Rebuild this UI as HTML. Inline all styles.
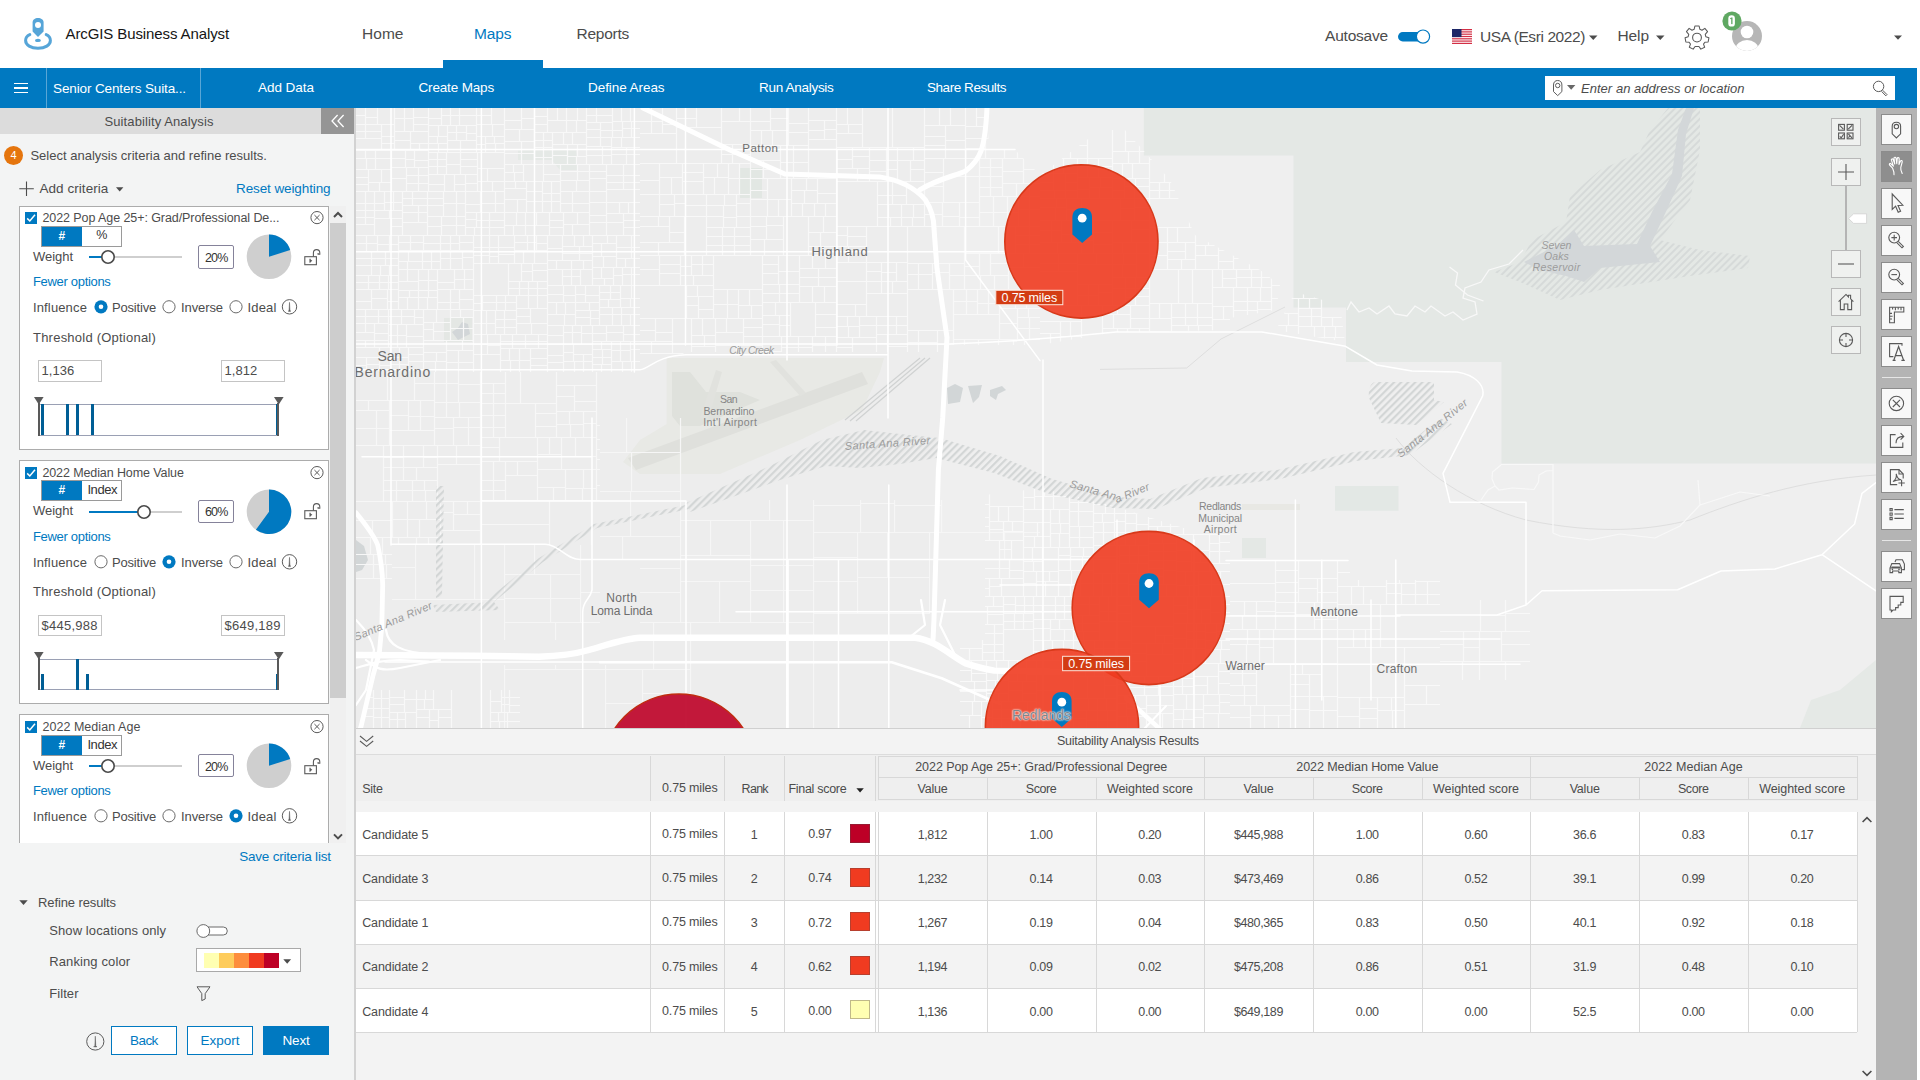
<!DOCTYPE html>
<html>
<head>
<meta charset="utf-8">
<title>ArcGIS Business Analyst</title>
<style>
*{box-sizing:border-box;margin:0;padding:0}
html,body{width:1920px;height:1080px;overflow:hidden;background:#fff;font-family:"Liberation Sans",sans-serif;color:#4c4c4c}
#app{position:relative;width:1917px;height:1080px;overflow:hidden;background:#fff}
.abs{position:absolute}
.t{position:absolute;white-space:nowrap;line-height:1}
/* header */
#hdr{position:absolute;left:0;top:0;width:1917px;height:68px;background:#fff}
#hdr .nav{position:absolute;top:26px;font-size:15.5px;color:#4c4c4c;line-height:1}
#tabline{position:absolute;left:443px;top:60px;width:100px;height:8px;background:#0079c1}
/* blue bar */
#bar{position:absolute;left:0;top:68px;width:1917px;height:40px;background:#0079c1;color:#fff}
#bar .sep{position:absolute;top:0;width:1px;height:40px;background:#59a6d6}
#bar .mi{position:absolute;top:13px;font-size:13px;line-height:1;color:#fff;white-space:nowrap}
#search{position:absolute;left:1545px;top:8px;width:350px;height:24px;background:#fff}
/* left panel */
#left{position:absolute;left:0;top:108px;width:354px;height:972px;background:#f3f4f4}
#lborder{position:absolute;left:354px;top:108px;width:2px;height:972px;background:#d2d2d2}
#lhead{position:absolute;left:0;top:0;width:354px;height:26px;background:#dcdcdc}
#lcollapse{position:absolute;left:321px;top:0;width:33px;height:26px;background:#959595}
.card{background:#fff;border:1px solid #acacac}
/* map */
#map{position:absolute;left:356px;top:108px;width:1520px;height:620px;background:#eeeeee;overflow:hidden}
/* right tools */
#tools{position:absolute;left:1876px;top:108px;width:41px;height:972px;background:#b4b4b4}
.tb{position:absolute;left:5px;width:31px;height:30.5px;background:#f8f8f8;border:1px solid #8c8c8c}
/* results */
#results{position:absolute;left:356px;top:728px;width:1520px;height:352px;background:#f3f3f3}
</style>
</head>
<body>
<div id="app">
<div id="hdr"><svg class="abs" style="left:15px;top:10px" width="50" height="50" viewBox="0 0 50 50">
<path d="M17.6 12.5 C17.6 9.5 20 8 23 8 C26 8 28.6 9.5 28.6 12.5 L28.6 21.5 L23 27 L17.6 21.5 Z" fill="#56a5d8"/>
<circle cx="23" cy="15" r="3" fill="#fff"/>
<ellipse cx="23" cy="30.4" rx="2.9" ry="1.7" fill="#56a5d8"/>
<path d="M14.8 24.6 C11.5 26 10.6 28.3 10.6 30.6 C10.6 35.2 16 38.2 23 38.2 C30 38.2 35.4 35.2 35.4 30.6 C35.4 28.3 34.5 26 31.2 24.6" fill="none" stroke="#56a5d8" stroke-width="3" stroke-linecap="round"/>
</svg><span class="t" style="left:65.50px;top:26.30px;font-size:15px;letter-spacing:-0.105px;color:#151515;">ArcGIS Business Analyst</span><span class="t" style="left:362.00px;top:25.88px;font-size:15.5px;letter-spacing:0.035px;color:#4c4c4c;">Home</span><span class="t" style="left:474.00px;top:25.88px;font-size:15.5px;letter-spacing:-0.102px;color:#0079c1;">Maps</span><span class="t" style="left:576.50px;top:25.88px;font-size:15.5px;letter-spacing:-0.254px;color:#4c4c4c;">Reports</span><div id="tabline"></div><span class="t" style="left:1325.00px;top:27.88px;font-size:15.5px;letter-spacing:-0.205px;color:#4c4c4c;">Autosave</span><svg class="abs" style="left:1396px;top:27px" width="38" height="20" viewBox="0 0 38 20">
<rect x="2" y="5" width="30" height="9.5" rx="4.75" fill="#0079c1"/>
<circle cx="27" cy="9.6" r="6.6" fill="#fff" stroke="#0079c1" stroke-width="1.2"/></svg><svg class="abs" style="left:1452px;top:29px" width="20" height="15" viewBox="0 0 20 15">
<rect width="20" height="15" fill="#fff"/>
<g fill="#d32f45"><rect y="0" width="20" height="1.25"/><rect y="2.3" width="20" height="1.2"/><rect y="4.6" width="20" height="1.2"/><rect y="6.9" width="20" height="1.2"/><rect y="9.2" width="20" height="1.2"/><rect y="11.5" width="20" height="1.2"/><rect y="13.8" width="20" height="1.2"/></g>
<rect width="9.5" height="8.1" fill="#1d2767"/></svg><span class="t" style="left:1480.00px;top:28.88px;font-size:15.5px;letter-spacing:-0.409px;color:#4c4c4c;">USA (Esri 2022)</span><svg class="abs" style="left:1589px;top:35px" width="9" height="6"><path d="M0 0.5 L8.5 0.5 L4.25 5 Z" fill="#4c4c4c"/></svg><span class="t" style="left:1617.50px;top:27.88px;font-size:15.5px;letter-spacing:-0.098px;color:#4c4c4c;">Help</span><svg class="abs" style="left:1656px;top:35px" width="9" height="6"><path d="M0 0.5 L8.5 0.5 L4.25 5 Z" fill="#4c4c4c"/></svg><svg class="abs" style="left:1683px;top:24px" width="28" height="28" viewBox="-14 -14 28 28">
<path d="M-2.2 -12 L2.2 -12 L3 -8.6 L5.2 -7.6 L8.2 -9.6 L11 -6.2 L8.6 -3.4 L9.2 -1 L12.4 0.2 L11.6 4.6 L8.2 4.8 L6.8 6.8 L8 10 L4 12 L2 9.2 L-2 9.2 L-4 12 L-8 10 L-6.8 6.8 L-8.2 4.8 L-11.6 4.6 L-12.4 0.2 L-9.2 -1 L-8.6 -3.4 L-11 -6.2 L-8.2 -9.6 L-5.2 -7.6 L-3 -8.6 Z" fill="none" stroke="#5a5a5a" stroke-width="1.1" stroke-linejoin="round" transform="translate(0,-0.4) scale(0.96)"/>
<circle cx="0" cy="-0.4" r="4.4" fill="none" stroke="#5a5a5a" stroke-width="1.1"/></svg><svg class="abs" style="left:1720px;top:9px" width="44" height="44" viewBox="0 0 44 44">
<defs><clipPath id="avc"><circle cx="27" cy="27" r="15"/></clipPath></defs>
<circle cx="27" cy="27" r="15" fill="#b6b6b6"/>
<g clip-path="url(#avc)"><circle cx="27" cy="23" r="6.3" fill="#fff"/><ellipse cx="27" cy="40.5" rx="11.5" ry="9.5" fill="#fff"/></g>
<circle cx="12" cy="12" r="9.6" fill="#5fa862"/>
<rect x="8.3" y="6.2" width="6.6" height="11.4" rx="3.2" fill="#fff"/>
<rect x="11.2" y="8.5" width="1.3" height="6.6" fill="#5fa862"/><rect x="10.2" y="8.9" width="1.6" height="1.2" fill="#5fa862"/>
</svg><svg class="abs" style="left:1894px;top:35px" width="9" height="6"><path d="M0 0.5 L8 0.5 L4 4.8 Z" fill="#4c4c4c"/></svg></div>
<div id="bar"><div class="abs" style="left:14px;top:15px;width:14px;height:1.3px;background:#fff"></div><div class="abs" style="left:14px;top:19.3px;width:14px;height:1.3px;background:#fff"></div><div class="abs" style="left:14px;top:23.6px;width:14px;height:1.3px;background:#fff"></div><div class="sep" style="left:46px"></div><div class="sep" style="left:200px"></div><span class="t" style="left:53.00px;top:13.57px;font-size:13.5px;letter-spacing:-0.123px;color:#fff;">Senior Centers Suita...</span><span class="t" style="left:258.00px;top:12.57px;font-size:13.5px;letter-spacing:-0.037px;color:#fff;">Add Data</span><span class="t" style="left:418.50px;top:12.57px;font-size:13.5px;letter-spacing:-0.163px;color:#fff;">Create Maps</span><span class="t" style="left:588.00px;top:12.57px;font-size:13.5px;letter-spacing:-0.066px;color:#fff;">Define Areas</span><span class="t" style="left:759.00px;top:12.57px;font-size:13.5px;letter-spacing:-0.296px;color:#fff;">Run Analysis</span><span class="t" style="left:927.00px;top:12.57px;font-size:13.5px;letter-spacing:-0.446px;color:#fff;">Share Results</span><div id="search"><svg class="abs" style="left:6px;top:3px" width="14" height="18" viewBox="0 0 14 18"><path d="M2.5 6 C2.5 3 4.2 1.5 6.7 1.5 C9.2 1.5 10.9 3 10.9 6 L10.9 12.6 L6.7 16.6 L2.5 12.6 Z" fill="none" stroke="#5e5e5e" stroke-width="1"/><circle cx="6.7" cy="6.5" r="2.2" fill="none" stroke="#5e5e5e" stroke-width="1"/></svg><svg class="abs" style="left:22.3px;top:9.3px" width="9" height="6"><path d="M0 0 L8.4 0 L4.2 4.8 Z" fill="#686868"/></svg><span class="t" style="left:36.00px;top:5.50px;font-size:13px;letter-spacing:0.032px;color:#4c4c4c;font-style:italic;">Enter an address or location</span><svg class="abs" style="left:326px;top:3px" width="20" height="20" viewBox="0 0 20 20"><circle cx="7.6" cy="7.4" r="5.2" fill="none" stroke="#595959" stroke-width="1"/><path d="M11.6 11.2 L16 15.6 L14.8 16.8 L10.6 12.4" fill="#fff" stroke="#595959" stroke-width="1"/></svg></div></div>
<div id="left"><div id="lhead"></div><div id="lcollapse"><svg class="abs" style="left:9px;top:6px" width="16" height="14"><path d="M7.6 1 L2 7 L7.6 13 M13.6 1 L8 7 L13.6 13" fill="none" stroke="#fff" stroke-width="1.3"/></svg></div><span class="t" style="left:104.50px;top:7.00px;font-size:13px;letter-spacing:0.102px;color:#4c4c4c;">Suitability Analysis</span><div class="abs" style="left:4px;top:37.7px;width:19px;height:19px;border-radius:50%;background:#e5750d"></div><span class="t" style="left:10.44px;top:41.89px;font-size:11px;color:#fff;">4</span><span class="t" style="left:30.40px;top:41.00px;font-size:13px;letter-spacing:0.007px;color:#4c4c4c;">Select analysis criteria and refine results.</span><svg class="abs" style="left:19px;top:73px" width="16" height="16"><path d="M7.5 0.5 V15 M0.3 7.7 H14.8" stroke="#4c4c4c" stroke-width="1.1"/></svg><span class="t" style="left:39.40px;top:73.57px;font-size:13.5px;letter-spacing:0.060px;color:#4c4c4c;">Add criteria</span><svg class="abs" style="left:116px;top:78.5px" width="8" height="6"><path d="M0 0.3 L7.4 0.3 L3.7 4.6 Z" fill="#4c4c4c"/></svg><span class="t" style="left:236.00px;top:73.57px;font-size:13.5px;letter-spacing:-0.104px;color:#0079c1;">Reset weighting</span><div class="abs" style="left:0;top:98px;width:354px;height:637.3px;overflow:hidden"><div class="abs card" style="left:19px;top:0.3px;width:310px;height:243.5px"><div class="abs" style="left:0;top:0px"><div class="abs" style="left:5px;top:5px;width:12px;height:12px;background:#0079c1"></div><svg class="abs" style="left:5px;top:5px" width="12" height="12"><path d="M2.2 6.4 L4.8 9 L10 2.8" fill="none" stroke="#fff" stroke-width="1.5"/></svg><span class="t" style="left:22.40px;top:5.02px;font-size:12.5px;letter-spacing:-0.075px;color:#4c4c4c;">2022 Pop Age 25+: Grad/Professional De...</span><svg class="abs" style="left:289.3px;top:3px" width="16" height="16" viewBox="0 0 16 16"><circle cx="8" cy="7.6" r="6.1" fill="none" stroke="#5a5a5a" stroke-width="1"/><path d="M5.4 5 L10.6 10.2 M10.6 5 L5.4 10.2" stroke="#5a5a5a" stroke-width="1"/></svg><div class="abs" style="left:21px;top:18.6px;width:81px;height:21px;background:#fff;border:1px solid #9a9a9a"></div><div class="abs" style="left:22px;top:19.6px;width:39.5px;height:19px;background:#0079c1"></div><span class="t" style="left:38.56px;top:22.44px;font-size:12px;color:#fff;font-weight:bold;">#</span><span class="t" style="left:76.24px;top:21.72px;font-size:12.5px;color:#333;">%</span><span class="t" style="left:13.00px;top:42.80px;font-size:13px;letter-spacing:-0.039px;color:#4c4c4c;">Weight</span><div class="abs" style="left:69px;top:49px;width:93px;height:2px;background:#cfcfcf"></div><div class="abs" style="left:69px;top:49px;width:18.7px;height:2px;background:#0079c1"></div><svg class="abs" style="left:79.7px;top:42px" width="16" height="16"><circle cx="8" cy="8" r="6.2" fill="#fff" stroke="#4a4a4a" stroke-width="1.6"/></svg><div class="abs" style="left:178.2px;top:38px;width:35.6px;height:23.3px;background:#fff;border:1px solid #85829a;border-radius:2px"></div><span class="t" style="left:185.00px;top:44.42px;font-size:12.5px;letter-spacing:-0.844px;color:#333;">20%</span><svg class="abs" style="left:225px;top:26px" width="48" height="48" viewBox="0 0 48 48"><circle cx="24" cy="23.8" r="22.3" fill="#cfcfcf"/><path d="M24 23.8 L24 1.5 A22.3 22.3 0 0 1 45.21 16.91 Z" fill="#0079c1"/></svg><svg class="abs" style="left:283.6px;top:41.5px" width="18" height="18"><g transform="translate(0.2,0.1)" fill="none" stroke="#5a5a5a" stroke-width="1.1"><rect x="0.6" y="7.6" width="11.6" height="8"/><path d="M9.2 7.4 V3.8 C9.2 1.4 10.6 0.5 12.4 0.5 C14.2 0.5 15.6 1.4 15.6 3.8 V5.2 H13.9 V3.8"/><path d="M5.8 9.6 V13.6 M5.8 10.6 L7.2 11.6 L5.8 12.6" /></g></svg><span class="t" style="left:13.00px;top:68.00px;font-size:13px;letter-spacing:-0.320px;color:#0079c1;">Fewer options</span><span class="t" style="left:13.00px;top:94.00px;font-size:13px;letter-spacing:0.137px;color:#4c4c4c;">Influence</span><svg class="abs" style="left:0;top:90px" width="308" height="20"><circle cx="81" cy="9.8" r="6.6" fill="#0079c1"/><circle cx="81" cy="9.8" r="2.3" fill="#fff"/><circle cx="149" cy="9.8" r="6.1" fill="#fff" stroke="#6a6a6a" stroke-width="1"/><circle cx="216" cy="9.8" r="6.1" fill="#fff" stroke="#6a6a6a" stroke-width="1"/><circle cx="269.5" cy="9.8" r="7.2" fill="none" stroke="#5a5a5a" stroke-width="1"/><path d="M269.5 5.336 L269 14.12 L270 14.12 Z" fill="#5a5a5a" stroke="#5a5a5a" stroke-width="0.5"/><path d="M268.06 14.12 h2.88" stroke="#5a5a5a" stroke-width="0.9" fill="none"/></svg><span class="t" style="left:92.00px;top:94.00px;font-size:13px;letter-spacing:-0.191px;color:#4c4c4c;">Positive</span><span class="t" style="left:161.00px;top:94.00px;font-size:13px;letter-spacing:-0.092px;color:#4c4c4c;">Inverse</span><span class="t" style="left:227.50px;top:94.00px;font-size:13px;letter-spacing:0.159px;color:#4c4c4c;">Ideal</span><span class="t" style="left:13.00px;top:123.50px;font-size:13px;letter-spacing:0.225px;color:#4c4c4c;">Threshold (Optional)</span><div class="abs" style="left:18px;top:153px;width:64px;height:21.5px;background:#fff;border:1px solid #c4c4c4"></div><div class="abs" style="left:201.2px;top:153px;width:64px;height:21.5px;background:#fff;border:1px solid #c4c4c4"></div><span class="t" style="left:21.60px;top:157.00px;font-size:13px;letter-spacing:0.031px;color:#4c4c4c;">1,136</span><span class="t" style="left:204.60px;top:157.00px;font-size:13px;letter-spacing:0.031px;color:#4c4c4c;">1,812</span><div class="abs" style="left:18.4px;top:197px;width:241px;height:31.5px;background:#fff;border:1px solid #9aa0b4"></div><div class="abs" style="left:20.9px;top:197px;width:3px;height:31px;background:#005e95"></div><div class="abs" style="left:46px;top:197px;width:3px;height:31px;background:#005e95"></div><div class="abs" style="left:56px;top:197px;width:3px;height:31px;background:#005e95"></div><div class="abs" style="left:71px;top:197px;width:3px;height:31px;background:#005e95"></div><div class="abs" style="left:255.6px;top:197px;width:1.6px;height:31px;background:#005e95"></div><div class="abs" style="left:17.6px;top:196px;width:2.2px;height:32.5px;background:#595959"></div><svg class="abs" style="left:13.8px;top:190px" width="10" height="8"><path d="M0 0 L9.6 0 L4.8 7.6 Z" fill="#595959"/></svg><div class="abs" style="left:257.3px;top:196px;width:2.2px;height:32.5px;background:#595959"></div><svg class="abs" style="left:253.8px;top:190px" width="10" height="8"><path d="M0 0 L9.6 0 L4.8 7.6 Z" fill="#595959"/></svg></div></div><div class="abs card" style="left:19px;top:254.3px;width:310px;height:243.5px"><div class="abs" style="left:0;top:0.3px"><div class="abs" style="left:5px;top:5px;width:12px;height:12px;background:#0079c1"></div><svg class="abs" style="left:5px;top:5px" width="12" height="12"><path d="M2.2 6.4 L4.8 9 L10 2.8" fill="none" stroke="#fff" stroke-width="1.5"/></svg><span class="t" style="left:22.40px;top:5.02px;font-size:12.5px;letter-spacing:-0.101px;color:#4c4c4c;">2022 Median Home Value</span><svg class="abs" style="left:289.3px;top:3px" width="16" height="16" viewBox="0 0 16 16"><circle cx="8" cy="7.6" r="6.1" fill="none" stroke="#5a5a5a" stroke-width="1"/><path d="M5.4 5 L10.6 10.2 M10.6 5 L5.4 10.2" stroke="#5a5a5a" stroke-width="1"/></svg><div class="abs" style="left:21px;top:18.6px;width:81px;height:21px;background:#fff;border:1px solid #9a9a9a"></div><div class="abs" style="left:22px;top:19.6px;width:39.5px;height:19px;background:#0079c1"></div><span class="t" style="left:38.56px;top:22.44px;font-size:12px;color:#fff;font-weight:bold;">#</span><span class="t" style="left:67.40px;top:21.80px;font-size:13px;letter-spacing:-0.402px;color:#333;">Index</span><span class="t" style="left:13.00px;top:42.80px;font-size:13px;letter-spacing:-0.039px;color:#4c4c4c;">Weight</span><div class="abs" style="left:69px;top:49px;width:93px;height:2px;background:#cfcfcf"></div><div class="abs" style="left:69px;top:49px;width:54.8px;height:2px;background:#0079c1"></div><svg class="abs" style="left:115.8px;top:42px" width="16" height="16"><circle cx="8" cy="8" r="6.2" fill="#fff" stroke="#4a4a4a" stroke-width="1.6"/></svg><div class="abs" style="left:178.2px;top:38px;width:35.6px;height:23.3px;background:#fff;border:1px solid #85829a;border-radius:2px"></div><span class="t" style="left:185.00px;top:44.42px;font-size:12.5px;letter-spacing:-0.844px;color:#333;">60%</span><svg class="abs" style="left:225px;top:26px" width="48" height="48" viewBox="0 0 48 48"><circle cx="24" cy="23.8" r="22.3" fill="#cfcfcf"/><path d="M24 23.8 L24 1.5 A22.3 22.3 0 1 1 10.89 41.84 Z" fill="#0079c1"/></svg><svg class="abs" style="left:283.6px;top:41.5px" width="18" height="18"><g transform="translate(0.2,0.1)" fill="none" stroke="#5a5a5a" stroke-width="1.1"><rect x="0.6" y="7.6" width="11.6" height="8"/><path d="M9.2 7.4 V3.8 C9.2 1.4 10.6 0.5 12.4 0.5 C14.2 0.5 15.6 1.4 15.6 3.8 V5.2 H13.9 V3.8"/><path d="M5.8 9.6 V13.6 M5.8 10.6 L7.2 11.6 L5.8 12.6" /></g></svg><span class="t" style="left:13.00px;top:68.00px;font-size:13px;letter-spacing:-0.320px;color:#0079c1;">Fewer options</span><span class="t" style="left:13.00px;top:94.00px;font-size:13px;letter-spacing:0.137px;color:#4c4c4c;">Influence</span><svg class="abs" style="left:0;top:90px" width="308" height="20"><circle cx="81" cy="9.8" r="6.1" fill="#fff" stroke="#6a6a6a" stroke-width="1"/><circle cx="149" cy="9.8" r="6.6" fill="#0079c1"/><circle cx="149" cy="9.8" r="2.3" fill="#fff"/><circle cx="216" cy="9.8" r="6.1" fill="#fff" stroke="#6a6a6a" stroke-width="1"/><circle cx="269.5" cy="9.8" r="7.2" fill="none" stroke="#5a5a5a" stroke-width="1"/><path d="M269.5 5.336 L269 14.12 L270 14.12 Z" fill="#5a5a5a" stroke="#5a5a5a" stroke-width="0.5"/><path d="M268.06 14.12 h2.88" stroke="#5a5a5a" stroke-width="0.9" fill="none"/></svg><span class="t" style="left:92.00px;top:94.00px;font-size:13px;letter-spacing:-0.191px;color:#4c4c4c;">Positive</span><span class="t" style="left:161.00px;top:94.00px;font-size:13px;letter-spacing:-0.092px;color:#4c4c4c;">Inverse</span><span class="t" style="left:227.50px;top:94.00px;font-size:13px;letter-spacing:0.159px;color:#4c4c4c;">Ideal</span><span class="t" style="left:13.00px;top:123.50px;font-size:13px;letter-spacing:0.225px;color:#4c4c4c;">Threshold (Optional)</span><div class="abs" style="left:18px;top:153px;width:64px;height:21.5px;background:#fff;border:1px solid #c4c4c4"></div><div class="abs" style="left:201.2px;top:153px;width:64px;height:21.5px;background:#fff;border:1px solid #c4c4c4"></div><span class="t" style="left:21.60px;top:157.00px;font-size:13px;letter-spacing:0.221px;color:#4c4c4c;">$445,988</span><span class="t" style="left:204.60px;top:157.00px;font-size:13px;letter-spacing:0.221px;color:#4c4c4c;">$649,189</span><div class="abs" style="left:18.4px;top:197px;width:241px;height:31.5px;background:#fff;border:1px solid #9aa0b4"></div><div class="abs" style="left:20.7px;top:212.5px;width:3px;height:15.5px;background:#005e95"></div><div class="abs" style="left:56px;top:197px;width:3px;height:31px;background:#005e95"></div><div class="abs" style="left:66px;top:212.5px;width:3px;height:15.5px;background:#005e95"></div><div class="abs" style="left:256px;top:212.5px;width:1.4px;height:15.5px;background:#005e95"></div><div class="abs" style="left:17.6px;top:196px;width:2.2px;height:32.5px;background:#595959"></div><svg class="abs" style="left:13.8px;top:190px" width="10" height="8"><path d="M0 0 L9.6 0 L4.8 7.6 Z" fill="#595959"/></svg><div class="abs" style="left:257.3px;top:196px;width:2.2px;height:32.5px;background:#595959"></div><svg class="abs" style="left:253.8px;top:190px" width="10" height="8"><path d="M0 0 L9.6 0 L4.8 7.6 Z" fill="#595959"/></svg></div></div><div class="abs card" style="left:19px;top:508.3px;width:310px;height:243.5px"><div class="abs" style="left:0;top:0.9px"><div class="abs" style="left:5px;top:5px;width:12px;height:12px;background:#0079c1"></div><svg class="abs" style="left:5px;top:5px" width="12" height="12"><path d="M2.2 6.4 L4.8 9 L10 2.8" fill="none" stroke="#fff" stroke-width="1.5"/></svg><span class="t" style="left:22.40px;top:5.02px;font-size:12.5px;letter-spacing:0.046px;color:#4c4c4c;">2022 Median Age</span><svg class="abs" style="left:289.3px;top:3px" width="16" height="16" viewBox="0 0 16 16"><circle cx="8" cy="7.6" r="6.1" fill="none" stroke="#5a5a5a" stroke-width="1"/><path d="M5.4 5 L10.6 10.2 M10.6 5 L5.4 10.2" stroke="#5a5a5a" stroke-width="1"/></svg><div class="abs" style="left:21px;top:18.6px;width:81px;height:21px;background:#fff;border:1px solid #9a9a9a"></div><div class="abs" style="left:22px;top:19.6px;width:39.5px;height:19px;background:#0079c1"></div><span class="t" style="left:38.56px;top:22.44px;font-size:12px;color:#fff;font-weight:bold;">#</span><span class="t" style="left:67.40px;top:21.80px;font-size:13px;letter-spacing:-0.402px;color:#333;">Index</span><span class="t" style="left:13.00px;top:42.80px;font-size:13px;letter-spacing:-0.039px;color:#4c4c4c;">Weight</span><div class="abs" style="left:69px;top:49px;width:93px;height:2px;background:#cfcfcf"></div><div class="abs" style="left:69px;top:49px;width:18.7px;height:2px;background:#0079c1"></div><svg class="abs" style="left:79.7px;top:42px" width="16" height="16"><circle cx="8" cy="8" r="6.2" fill="#fff" stroke="#4a4a4a" stroke-width="1.6"/></svg><div class="abs" style="left:178.2px;top:38px;width:35.6px;height:23.3px;background:#fff;border:1px solid #85829a;border-radius:2px"></div><span class="t" style="left:185.00px;top:44.42px;font-size:12.5px;letter-spacing:-0.844px;color:#333;">20%</span><svg class="abs" style="left:225px;top:26px" width="48" height="48" viewBox="0 0 48 48"><circle cx="24" cy="23.8" r="22.3" fill="#cfcfcf"/><path d="M24 23.8 L24 1.5 A22.3 22.3 0 0 1 45.21 16.91 Z" fill="#0079c1"/></svg><svg class="abs" style="left:283.6px;top:41.5px" width="18" height="18"><g transform="translate(0.2,0.1)" fill="none" stroke="#5a5a5a" stroke-width="1.1"><rect x="0.6" y="7.6" width="11.6" height="8"/><path d="M9.2 7.4 V3.8 C9.2 1.4 10.6 0.5 12.4 0.5 C14.2 0.5 15.6 1.4 15.6 3.8 V5.2 H13.9 V3.8"/><path d="M5.8 9.6 V13.6 M5.8 10.6 L7.2 11.6 L5.8 12.6" /></g></svg><span class="t" style="left:13.00px;top:68.00px;font-size:13px;letter-spacing:-0.320px;color:#0079c1;">Fewer options</span><span class="t" style="left:13.00px;top:94.00px;font-size:13px;letter-spacing:0.137px;color:#4c4c4c;">Influence</span><svg class="abs" style="left:0;top:90px" width="308" height="20"><circle cx="81" cy="9.8" r="6.1" fill="#fff" stroke="#6a6a6a" stroke-width="1"/><circle cx="149" cy="9.8" r="6.1" fill="#fff" stroke="#6a6a6a" stroke-width="1"/><circle cx="216" cy="9.8" r="6.6" fill="#0079c1"/><circle cx="216" cy="9.8" r="2.3" fill="#fff"/><circle cx="269.5" cy="9.8" r="7.2" fill="none" stroke="#5a5a5a" stroke-width="1"/><path d="M269.5 5.336 L269 14.12 L270 14.12 Z" fill="#5a5a5a" stroke="#5a5a5a" stroke-width="0.5"/><path d="M268.06 14.12 h2.88" stroke="#5a5a5a" stroke-width="0.9" fill="none"/></svg><span class="t" style="left:92.00px;top:94.00px;font-size:13px;letter-spacing:-0.191px;color:#4c4c4c;">Positive</span><span class="t" style="left:161.00px;top:94.00px;font-size:13px;letter-spacing:-0.092px;color:#4c4c4c;">Inverse</span><span class="t" style="left:227.50px;top:94.00px;font-size:13px;letter-spacing:0.159px;color:#4c4c4c;">Ideal</span></div></div><div class="abs" style="left:329.5px;top:0;width:16.5px;height:638px;background:#f0f0f0"></div><div class="abs" style="left:329.5px;top:17px;width:16.5px;height:474.5px;background:#cdcdcd"></div><svg class="abs" style="left:332px;top:4px" width="12" height="9"><path d="M2 7 L6 3 L10 7" fill="none" stroke="#4c4c4c" stroke-width="2"/></svg><svg class="abs" style="left:332px;top:626px" width="12" height="9"><path d="M2 2.4 L6 6.4 L10 2.4" fill="none" stroke="#4c4c4c" stroke-width="2"/></svg></div><span class="t" style="left:239.20px;top:742.07px;font-size:13.5px;letter-spacing:-0.205px;color:#0079c1;">Save criteria list</span><svg class="abs" style="left:19px;top:791.5px" width="10" height="6"><path d="M0.3 0.3 L8.7 0.3 L4.5 5 Z" fill="#4c4c4c"/></svg><span class="t" style="left:38.00px;top:788.40px;font-size:13px;letter-spacing:-0.106px;color:#4c4c4c;">Refine results</span><span class="t" style="left:49.20px;top:816.30px;font-size:13px;letter-spacing:0.110px;color:#4c4c4c;">Show locations only</span><svg class="abs" style="left:194px;top:813.5px" width="36" height="18" viewBox="0 0 36 18"><rect x="4" y="5" width="29.3" height="8" rx="4" fill="#fff" stroke="#6a6a6a" stroke-width="1"/><circle cx="9.3" cy="9" r="6.4" fill="#fff" stroke="#6a6a6a" stroke-width="1"/></svg><span class="t" style="left:49.20px;top:846.50px;font-size:13px;letter-spacing:0.115px;color:#4c4c4c;">Ranking color</span><div class="abs" style="left:196px;top:840.3px;width:104.5px;height:24px;background:#fff;border:1px solid #a9a9a9"></div><div class="abs" style="left:203.6px;top:845px;width:15.2px;height:14.8px;background:#ffffb2"></div><div class="abs" style="left:218.7px;top:845px;width:15.2px;height:14.8px;background:#fecc5c"></div><div class="abs" style="left:233.8px;top:845px;width:15.2px;height:14.8px;background:#fd8d3c"></div><div class="abs" style="left:248.9px;top:845px;width:15.2px;height:14.8px;background:#f03b20"></div><div class="abs" style="left:264px;top:845px;width:15.2px;height:14.8px;background:#bd0026"></div><svg class="abs" style="left:283px;top:850.8px" width="9" height="6"><path d="M0.3 0.3 L8.1 0.3 L4.2 4.8 Z" fill="#4c4c4c"/></svg><span class="t" style="left:49.20px;top:879.30px;font-size:13px;letter-spacing:0.085px;color:#4c4c4c;">Filter</span><svg class="abs" style="left:196px;top:877.5px" width="16" height="16" viewBox="0 0 16 16"><path d="M1 0.8 H14 L9.2 7.6 V13 L5.8 14.6 V7.6 Z" fill="none" stroke="#5a5a5a" stroke-width="1" stroke-linejoin="round"/></svg><svg class="abs" style="left:85px;top:922.5px" width="21" height="21"><circle cx="10.3" cy="10.5" r="8.6" fill="none" stroke="#5a5a5a" stroke-width="1"/><path d="M10.3 5.168 L9.8 15.66 L10.8 15.66 Z" fill="#5a5a5a" stroke="#5a5a5a" stroke-width="0.5"/><path d="M8.58 15.66 h3.44" stroke="#5a5a5a" stroke-width="0.9" fill="none"/></svg><div class="abs" style="left:111px;top:918px;width:66px;height:28.7px;background:#fff;border:1px solid #0079c1"></div><div class="abs" style="left:187px;top:918px;width:66px;height:28.7px;background:#fff;border:1px solid #0079c1"></div><div class="abs" style="left:263px;top:918px;width:66px;height:28.7px;background:#0079c1"></div><span class="t" style="left:130.00px;top:926.07px;font-size:13.5px;letter-spacing:-0.554px;color:#0079c1;">Back</span><span class="t" style="left:200.50px;top:926.07px;font-size:13.5px;letter-spacing:-0.005px;color:#0079c1;">Export</span><span class="t" style="left:282.50px;top:926.07px;font-size:13.5px;letter-spacing:-0.141px;color:#fff;">Next</span></div><div id="lborder"></div>
<div id="map"><svg class="abs" style="left:0;top:0" width="1520" height="620" viewBox="356 108 1520 620"><defs>
<pattern id="g1" width="27" height="21" patternUnits="userSpaceOnUse"><path d="M0 0.5 H27 M0 10.5 H18 M0.5 0 V21 M9.5 0 V10 M18.5 0 V21 M13.5 10 V21" stroke="#f9f9f9" stroke-width="1" fill="none"/></pattern>
<pattern id="g2" width="44" height="36" patternUnits="userSpaceOnUse"><path d="M0 0.5 H44 M0 18.5 H30 M0.5 0 V36 M22.5 0 V18 M30.5 18 V36" stroke="#f7f7f7" stroke-width="1" fill="none"/></pattern>
<pattern id="g3" width="16" height="13" patternUnits="userSpaceOnUse"><path d="M0 0.5 H16 M0.5 0 V13 M8.5 0 V13" stroke="#fafafa" stroke-width="1" fill="none"/></pattern>
<pattern id="hat" width="5" height="5" patternUnits="userSpaceOnUse" patternTransform="rotate(-45)"><rect x="0" y="0" width="5" height="2.2" fill="#d3d6d6"/></pattern>
<pattern id="hat2" width="5" height="5" patternUnits="userSpaceOnUse" patternTransform="rotate(-45)"><rect x="0" y="0" width="5" height="2" fill="#d6dad9"/></pattern>
<clipPath id="mc"><rect x="356" y="108" width="1520" height="620"/></clipPath>
</defs><g clip-path="url(#mc)"><rect x="356" y="108" width="1520" height="620" fill="#ededed"/><path d="M987 108 L985.7 145 L965.6 171 L919.7 189.8 L925.4 199.8 L934 228.5 L937 268.7 L947 337.6 L942.7 418 L938.4 470 L934 619 L931 640 L965.6 663.4 L994.3 670.6 L1060 672 V728 H1876 V108 Z" fill="#efefef"/><path d="M1143.8 108 V155.6 H1293.5 V307.5 H1346 V362 H1501.5 V463.5 H1876 V108 Z" fill="#e4e8e5"/><rect x="740" y="168" width="22" height="30" fill="#e2e7e3"/><rect x="1335" y="486" width="63.5" height="24.7" fill="#e3e8e5"/><rect x="1242" y="504" width="58" height="6" fill="#e8e8e4"/><rect x="1242" y="538" width="24" height="20" fill="#e4e8e5"/><path d="M518 150.5 H576 L578 170 H560 L552 160 H518 Z" fill="#e5e9e6"/><rect x="444" y="318" width="28" height="24" fill="#e4e7e4"/><path d="M452 332 l6 -4 l4 -6 l6 2 l2 10 l-12 6 z" fill="#d2d6d8"/><path d="M666.7 358 H884 L880 372 L862 410 L800 440 L720 474 L640 474 L623 462 L640 440 L666.7 424 Z" fill="#e8e9e5"/><path d="M672 372 L690 372 L706 392 L740 392 L760 400 L700 426 L680 426 L672 416 Z" fill="#dfe1dc"/><path d="M628 458 L862 372 L868 384 L636 470 Z" fill="#dfe0dc"/><path d="M700 418 L716 370 L722 372 L708 420 Z M800 396 L770 362 L776 360 L806 393 Z" fill="#e1e2de"/><path d="M845 420 L920 358 M850 421 L925 358 M856 421 L930 358" stroke="#d0d2d2" stroke-width="1.2" fill="none"/><path d="M947 388 l8 -4 l8 4 l-3 14 l-12 2 z M968 386 l14 -1 l-3 12 l-6 6 z M990 390 l12 -4 l4 4 l-8 4 l-2 6 l-6 -4 z" fill="#d2d6d7"/><path d="M356 540 l8 6 l4 14 l-6 10 l-6 2 z" fill="#d2d6d7"/><clipPath id="ua"><path d="M356 108 H640 V372 H356 Z"/></clipPath><path clip-path="url(#ua)" d="M356 235.5H640M504.5 108V235M356 191.5H504M428.5 108V191M356 150.5H428M394.5 108V150M356 124.5H394M377.5 108V124M365.5 108V124M356 115.5H365M365 117.5H377M381.5 124V150M356 138.5H381M365.5 124V138M356 131.5H365M365 131.5H381M381 136.5H394M381 143.5H394M394 131.5H428M413.5 108V131M394 118.5H413M404.5 108V118M404.5 118V131M413 117.5H428M413 124.5H428M410.5 131V150M394 140.5H410M410 143.5H428M419.5 143V150M391.5 150V191M356 169.5H391M375.5 150V169M356 158.5H375M365.5 150V158M366.5 158V169M375 158.5H391M368.5 169V191M356 177.5H368M356 184.5H368M368 182.5H391M381.5 169V182M379.5 182V191M391 167.5H428M414.5 150V167M405.5 150V167M391 158.5H405M405 159.5H414M414 160.5H428M406.5 167V191M391 178.5H406M406 175.5H428M418.5 167V175M418.5 175V191M406 183.5H418M418 183.5H428M428 152.5H504M476.5 108V152M428 125.5H476M459.5 108V125M441.5 108V125M428 118.5H441M441 115.5H459M450.5 108V115M450.5 115V125M459 115.5H476M447.5 125V152M428 136.5H447M438.5 125V136M428 143.5H447M437.5 136V143M438.5 143V152M447 140.5H476M466.5 125V140M447 132.5H466M456.5 125V132M456.5 132V140M466 133.5H476M460.5 140V152M476 136.5H504M476 124.5H504M491.5 108V124M476 115.5H491M492.5 124V136M485.5 136V152M476 144.5H485M485 143.5H504M494.5 136V143M495.5 143V152M477.5 152V191M428 174.5H477M460.5 152V174M446.5 152V174M428 166.5H446M428 159.5H446M437.5 152V159M437.5 159V166M437.5 166V174M446 164.5H460M460 166.5H477M460 159.5H477M454.5 174V191M444.5 174V191M428 184.5H444M465.5 174V191M454 184.5H465M465 183.5H477M477 168.5H504M477 181.5H504M487.5 168V181M492.5 181V191M427.5 191V235M402.5 191V235M356 210.5H402M374.5 191V210M356 203.5H374M365.5 191V203M365.5 203V210M384.5 191V210M374 203.5H384M384 202.5H402M393.5 191V202M393.5 202V210M374.5 210V235M356 224.5H374M356 217.5H374M365.5 210V217M365.5 217V224M374 218.5H402M389.5 210V218M391.5 218V235M391 226.5H402M402 205.5H427M412.5 191V205M402 198.5H412M412 198.5H427M402 222.5H427M418.5 205V222M402 212.5H418M418 212.5H427M465.5 191V235M427 216.5H465M443.5 191V216M427 205.5H443M427 198.5H443M443 203.5H465M456.5 191V203M456.5 203V216M441.5 216V235M427 226.5H441M441 225.5H465M456.5 216V225M456.5 225V235M465 212.5H504M480.5 191V212M465 204.5H480M480 203.5H504M495.5 191V203M495.5 203V212M489.5 212V235M465 227.5H489M476.5 212V227M465 219.5H476M476 220.5H489M474.5 227V235M489 220.5H504M489 227.5H504M504 164.5H640M586.5 108V164M534.5 108V164M504 129.5H534M521.5 108V129M504 120.5H521M521 118.5H534M504 141.5H534M519.5 129V141M521.5 141V164M504 153.5H521M521 153.5H534M534 132.5H586M566.5 108V132M547.5 108V132M534 124.5H547M534 116.5H547M547 120.5H566M557.5 108V120M566 120.5H586M577.5 108V120M576.5 120V132M552.5 132V164M534 147.5H552M534 140.5H552M543.5 132V140M543.5 140V147M534 157.5H552M543.5 147V157M543.5 157V164M552 144.5H586M563.5 132V144M572.5 132V144M567.5 144V164M552 155.5H567M567 156.5H586M577.5 144V156M576.5 156V164M586 137.5H640M612.5 108V137M586 122.5H612M596.5 108V122M586 115.5H596M596 115.5H612M600.5 122V137M586 129.5H600M600 130.5H612M612 121.5H640M630.5 108V121M621.5 108V121M622.5 121V137M612 130.5H622M622 128.5H640M631.5 121V128M631.5 128V137M611.5 137V164M586 146.5H611M600.5 137V146M602.5 146V164M586 155.5H602M602 155.5H611M611 147.5H640M621.5 137V147M626.5 147V164M611 154.5H626M626 154.5H640M589.5 164V235M504 212.5H589M560.5 164V212M504 181.5H560M523.5 164V181M504 172.5H523M513.5 164V172M514.5 172V181M543.5 164V181M543 174.5H560M526.5 181V212M504 199.5H526M504 188.5H526M515.5 181V188M517.5 199V212M526 201.5H560M542.5 181V201M526 191.5H542M542 193.5H560M551.5 181V193M551.5 193V201M542.5 201V212M551.5 201V212M560 191.5H589M560 180.5H589M577.5 164V180M560 171.5H577M577 171.5H589M576.5 180V191M572.5 191V212M560 203.5H572M572 203.5H589M549.5 212V235M525.5 212V235M504 225.5H525M516.5 212V225M513.5 225V235M525 225.5H549M536.5 212V225M534.5 225V235M563.5 212V235M549 227.5H563M549 220.5H563M563 224.5H589M577.5 212V224M572.5 224V235M589 202.5H640M606.5 164V202M589 178.5H606M589 171.5H606M589 191.5H606M606 189.5H640M623.5 164V189M606 175.5H623M606 182.5H623M623 175.5H640M623 182.5H640M606.5 202V235M589 222.5H606M589 215.5H606M606 213.5H640M628.5 202V213M619.5 202V213M623.5 213V235M606 222.5H623M623 227.5H640M623 220.5H640M547.5 235V372M473.5 235V372M356 309.5H473M398.5 235V309M356 275.5H398M356 251.5H398M377.5 235V251M366.5 235V251M356 243.5H366M366 243.5H377M389.5 235V251M377 244.5H389M389 244.5H398M371.5 251V275M356 265.5H371M356 258.5H371M371 265.5H398M385.5 251V265M371 258.5H385M385 258.5H398M389.5 265V275M380.5 265V275M356 289.5H398M379.5 275V289M368.5 275V289M356 282.5H368M368 282.5H379M388.5 275V289M379 282.5H388M388 282.5H398M371.5 289V309M356 301.5H371M387.5 289V309M371 298.5H387M387 301.5H398M398 269.5H473M440.5 235V269M398 250.5H440M423.5 235V250M410.5 235V250M398 242.5H410M410 242.5H423M423 243.5H440M422.5 250V269M398 261.5H422M408.5 250V261M407.5 261V269M422 261.5H440M431.5 250V261M431.5 261V269M440 250.5H473M459.5 235V250M440 243.5H459M450.5 235V243M450.5 243V250M459 242.5H473M462.5 250V269M440 258.5H462M450.5 250V258M450.5 258V269M462 257.5H473M437.5 269V309M398 290.5H437M418.5 269V290M398 281.5H418M407.5 269V281M418 280.5H437M428.5 269V280M428.5 280V290M418.5 290V309M398 297.5H418M409.5 290V297M407.5 297V309M418 297.5H437M428.5 290V297M427.5 297V309M437 289.5H473M454.5 269V289M437 282.5H454M454 279.5H473M464.5 269V279M464.5 279V289M459.5 289V309M437 302.5H459M450.5 289V302M450.5 302V309M459 299.5H473M423.5 309V372M356 347.5H423M388.5 309V347M356 323.5H388M378.5 309V323M365.5 309V323M356 316.5H365M365 316.5H378M378 316.5H388M374.5 323V347M356 332.5H374M365.5 323V332M356 340.5H374M365.5 340V347M374 333.5H388M374 340.5H388M388 324.5H423M401.5 309V324M388 316.5H401M414.5 309V324M401 316.5H414M414 317.5H423M406.5 324V347M388 335.5H406M397.5 324V335M397.5 335V347M406 336.5H423M390.5 347V372M379.5 347V372M356 357.5H379M366.5 357V372M356 365.5H366M366 364.5H379M379 358.5H390M379 365.5H390M408.5 347V372M390 357.5H408M399.5 347V357M390 364.5H408M399.5 357V364M399.5 364V372M408 361.5H423M408 354.5H423M423 340.5H473M450.5 309V340M423 322.5H450M436.5 309V322M433.5 322V340M423 329.5H433M433 331.5H450M450 328.5H473M450 317.5H473M460.5 309V317M463.5 317V328M463.5 328V340M446.5 340V372M423 361.5H446M423 352.5H446M436.5 352V361M435.5 361V372M446 350.5H473M462.5 340V350M446 362.5H473M458.5 350V362M458.5 362V372M473 295.5H547M473 263.5H547M514.5 235V263M489.5 235V263M473 247.5H489M473 255.5H489M489 247.5H514M498.5 235V247M498.5 247V263M489 256.5H498M498 254.5H514M514 250.5H547M527.5 235V250M514 242.5H527M536.5 235V250M527 242.5H536M536 243.5H547M534.5 250V263M523.5 250V263M508.5 263V295M508 281.5H547M532.5 263V281M521.5 263V281M521 271.5H532M532 270.5H547M528.5 281V295M519.5 281V295M508 288.5H519M519 288.5H528M537.5 281V295M528 288.5H537M537 288.5H547M473 334.5H547M516.5 295V334M473 310.5H516M496.5 295V310M482.5 295V310M473 303.5H482M482 302.5H496M505.5 295V310M496 302.5H505M505 302.5H516M495.5 310V334M473 323.5H495M486.5 310V323M486.5 323V334M495 319.5H516M504.5 310V319M504.5 319V334M495 327.5H504M504 327.5H516M516 308.5H547M537.5 295V308M528.5 295V308M516 323.5H547M530.5 308V323M516 316.5H530M531.5 323V334M500.5 334V372M473 354.5H500M487.5 334V354M473 344.5H487M487 345.5H500M500 348.5H547M525.5 334V348M512.5 334V348M500 341.5H512M512 341.5H525M538.5 334V348M525 341.5H538M538 341.5H547M530.5 348V372M500 360.5H530M519.5 348V360M509.5 348V360M519.5 360V372M510.5 360V372M530 358.5H547M530 365.5H547M547 285.5H640M592.5 235V285M547 260.5H592M562.5 235V260M547 248.5H562M562 246.5H592M574.5 235V246M583.5 235V246M579.5 246V260M562 253.5H579M579 253.5H592M571.5 260V285M547 269.5H571M556.5 260V269M562.5 269V285M562 276.5H571M571 269.5H592M583.5 260V269M580.5 269V285M571 276.5H580M592 267.5H640M616.5 235V267M592 256.5H616M592 243.5H616M607.5 235V243M601.5 243V256M603.5 256V267M616 247.5H640M631.5 235V247M616 258.5H640M631.5 247V258M625.5 258V267M613.5 267V285M592 278.5H613M601.5 267V278M604.5 278V285M622.5 267V285M613 275.5H622M622 274.5H640M631.5 267V274M631.5 274V285M547 325.5H640M599.5 285V325M575.5 285V325M547 302.5H575M563.5 285V302M547 294.5H563M563 295.5H575M547 314.5H575M556.5 302V314M565.5 302V314M564.5 314V325M575 302.5H599M585.5 285V302M575 294.5H585M585 295.5H599M575 310.5H599M589.5 302V310M590.5 310V325M575 317.5H590M590 318.5H599M599 307.5H640M620.5 285V307M599 299.5H620M610.5 285V299M599 292.5H610M610 292.5H620M608.5 299V307M620 298.5H640M631.5 285V298M630.5 298V307M621.5 307V325M599 314.5H621M612.5 307V314M612.5 314V325M621 314.5H640M630.5 314V325M592.5 325V372M547 344.5H592M563.5 325V344M547 335.5H563M581.5 325V344M563 332.5H581M572.5 325V332M572.5 332V344M581 333.5H592M563.5 344V372M547 355.5H563M547 362.5H563M563 361.5H592M573.5 344V361M563 352.5H573M573 354.5H592M583.5 354V361M574.5 361V372M583.5 361V372M592 341.5H640M623.5 325V341M606.5 325V341M592 333.5H606M606 332.5H623M623 334.5H640M611.5 341V372M592 357.5H611M592 349.5H611M601.5 341V349M602.5 349V357M592 364.5H611M602.5 357V364M601.5 364V372M611 361.5H640M630.5 341V361M611 350.5H630M620.5 341V350M620.5 350V361M630 349.5H640M622.5 361V372M631.5 361V372" stroke="#f8f8f8" stroke-width="1.2" fill="none"/><clipPath id="ub"><path d="M640 108 H985 L990 150 H1015 L1040 175 V345 H950 V352 H686 L656 370 H640 Z"/></clipPath><path clip-path="url(#ub)" d="M836.5 108V372M640 255.5H836M750.5 108V255M640 163.5H750M676.5 108V163M640 133.5H676M662.5 108V133M640 121.5H662M651.5 108V121M651.5 121V133M662 124.5H676M721.5 108V163M676 127.5H721M696.5 108V127M676 118.5H696M721 144.5H750M721 121.5H750M739.5 108V121M732.5 144V163M721 154.5H732M732 154.5H750M640 194.5H750M682.5 163V194M659.5 163V194M640 180.5H659M659 177.5H682M671.5 177V194M728.5 163V194M703.5 163V194M682 181.5H703M682 172.5H703M703 177.5H728M717.5 163V177M714.5 177V194M728 178.5H750M739.5 163V178M739.5 178V194M706.5 194V255M640 216.5H706M674.5 194V216M659.5 194V216M659 204.5H674M685.5 194V216M674 203.5H685M685 205.5H706M684.5 216V255M640 242.5H684M669.5 216V242M640 226.5H669M658.5 216V226M669 232.5H684M658.5 242V255M706 227.5H750M736.5 194V227M706 205.5H736M724.5 194V205M723.5 205V227M706 216.5H723M723 217.5H736M736 216.5H750M736 203.5H750M734.5 227V255M706 245.5H734M722.5 227V245M706 236.5H722M722 236.5H734M722.5 245V255M734 245.5H750M734 236.5H750M750 178.5H836M808.5 108V178M750 145.5H808M788.5 108V145M750 130.5H788M770.5 108V130M750 121.5H770M770 118.5H788M772.5 130V145M761.5 130V145M788 132.5H808M788 123.5H808M780.5 145V178M750 160.5H780M763.5 160V178M750 169.5H763M763 169.5H780M780 162.5H808M793.5 145V162M793.5 162V178M808 139.5H836M808 120.5H836M824.5 120V139M808 130.5H824M824 129.5H836M750 216.5H836M791.5 178V216M750 199.5H791M767.5 178V199M750 190.5H767M767.5 199V216M778.5 199V216M791 203.5H836M817.5 178V203M791 190.5H817M806.5 178V190M804.5 190V203M817 193.5H836M814.5 203V216M802.5 203V216M825.5 203V216M808.5 216V255M783.5 216V255M750 239.5H783M766.5 216V239M750 226.5H766M766 225.5H783M764.5 239V255M808 232.5H836M823.5 216V232M808 246.5H836M820.5 232V246M823.5 246V255M762.5 255V372M640 318.5H762M713.5 255V318M640 285.5H713M680.5 255V285M659.5 255V285M640 269.5H659M659 273.5H680M659 264.5H680M680 275.5H713M691.5 255V275M680 266.5H691M691 264.5H713M702.5 255V264M702.5 264V275M693.5 275V285M686.5 285V318M686 296.5H713M697.5 285V296M698.5 296V318M686 305.5H698M698 309.5H713M713 289.5H762M738.5 289V318M713 304.5H738M727.5 289V304M727.5 304V318M738 305.5H762M749.5 289V305M751.5 305V318M691.5 318V372M640 353.5H691M672.5 318V353M640 341.5H672M655.5 318V341M640 330.5H655M655 332.5H672M651.5 341V353M715.5 318V372M691 335.5H715M702.5 318V335M691 355.5H715M691 346.5H715M704.5 335V346M704.5 355V372M715 345.5H762M743.5 318V345M715 332.5H743M726.5 318V332M743 336.5H762M743 327.5H762M736.5 345V372M715 363.5H736M715 354.5H736M762 302.5H836M799.5 255V302M762 284.5H799M778.5 255V284M762 273.5H778M762 264.5H778M778 271.5H799M779.5 284V302M762 293.5H779M779 293.5H799M799 286.5H836M799 268.5H836M812.5 255V268M825.5 255V268M818.5 268V286M799 277.5H818M818 277.5H836M824.5 286V302M812.5 286V302M762 336.5H836M790.5 302V336M762 315.5H790M775.5 302V315M779.5 315V336M762 324.5H779M779 325.5H790M815.5 302V336M815 314.5H836M815 327.5H836M812.5 336V372M781.5 336V372M762 351.5H781M762 360.5H781M781 356.5H812M798.5 336V356M781 347.5H798M798 347.5H812M796.5 356V372M812 357.5H836M812 345.5H836M825.5 336V345M825.5 345V357M825.5 357V372M836 226.5H1040M924.5 108V226M836 147.5H924M892.5 108V147M862.5 108V147M836 133.5H862M836 124.5H862M847.5 108V124M848.5 124V133M836 181.5H924M869.5 147V181M836 168.5H869M852.5 147V168M836 159.5H852M852 156.5H869M857.5 168V181M897.5 147V181M869 160.5H897M886.5 147V160M886.5 160V181M869 171.5H886M886 169.5H897M897 160.5H924M913.5 147V160M910.5 160V181M910 169.5H924M877.5 181V226M877 204.5H924M906.5 181V204M892.5 181V204M877 195.5H892M892 195.5H906M901.5 204V226M877 217.5H901M888.5 204V217M890.5 217V226M901 217.5H924M913.5 204V217M912.5 217V226M924 158.5H1040M965.5 108V158M924 125.5H965M939.5 108V125M950.5 108V125M945.5 125V158M924 145.5H945M924 136.5H945M945 140.5H965M945 149.5H965M1004.5 108V158M965 138.5H1004M988.5 108V138M965 126.5H988M976.5 108V126M976 117.5H988M988 122.5H1004M985.5 138V158M965 148.5H985M985 149.5H1004M1004 140.5H1040M1004 129.5H1040M1028.5 129V140M1017.5 129V140M1017.5 140V158M1004 149.5H1017M1028.5 140V158M1017 149.5H1028M1028 149.5H1040M979.5 158V226M924 202.5H979M943.5 158V202M924 186.5H943M924 172.5H943M943 176.5H979M959.5 202V226M942.5 202V226M924 214.5H942M942 216.5H959M959 217.5H979M979 196.5H1040M1002.5 158V196M979 176.5H1002M990.5 158V176M979 167.5H990M990 167.5H1002M979 187.5H1002M990.5 176V187M990.5 187V196M1002 183.5H1040M1023.5 158V183M1002 171.5H1023M1023 169.5H1040M1016.5 183V196M1029.5 183V196M1018.5 196V226M993.5 196V226M979 212.5H993M993 212.5H1018M1007.5 196V212M1007.5 212V226M1018 209.5H1040M1029.5 196V209M1029.5 209V226M907.5 226V372M836 281.5H907M866.5 226V281M836 262.5H866M836 246.5H866M847.5 226V246M836 235.5H847M847 236.5H866M848.5 246V262M866 262.5H907M881.5 262V281M866 271.5H881M896.5 262V281M881 272.5H896M836 316.5H907M866.5 281V316M836 304.5H866M855.5 304V316M866 293.5H907M892.5 281V293M881.5 281V293M876.5 316V372M836 337.5H876M859.5 316V337M836 326.5H859M847.5 316V326M848.5 326V337M859 325.5H876M836 357.5H876M852.5 337V357M836 347.5H852M876 334.5H907M896.5 316V334M876 325.5H896M896 325.5H907M876 355.5H907M887.5 334V355M876 343.5H887M887 346.5H907M895.5 355V372M907 289.5H1040M964.5 226V289M907 263.5H964M932.5 263V289M907 274.5H932M918.5 263V274M918.5 274V289M949.5 263V289M932 272.5H949M949 275.5H964M964 253.5H1040M998.5 226V253M1015.5 226V253M1015 244.5H1040M1029.5 226V244M1015 235.5H1029M1029 235.5H1040M1029.5 244V253M1008.5 253V289M964 275.5H1008M979.5 253V275M964 266.5H979M990.5 253V275M990 263.5H1008M980.5 275V289M994.5 275V289M1008 267.5H1040M1023.5 253V267M953.5 289V372M907 330.5H953M907 355.5H953M937.5 330V355M907 342.5H937M918.5 330V342M918.5 342V355M937 344.5H953M923.5 355V372M942.5 355V372M953 339.5H1040M999.5 289V339M953 314.5H999M977.5 289V314M953 301.5H977M966.5 289V301M966.5 301V314M977 303.5H999M988.5 289V303M988.5 303V314M999 308.5H1040M1015.5 289V308M999 299.5H1015M1026.5 289V308M1015 298.5H1026M1026 298.5H1040M1017.5 308V339M999 323.5H1017M1017 328.5H1040M1017 317.5H1040M1028.5 308V317M1029.5 317V328M1029.5 328V339M998.5 339V372M978.5 339V372M953 357.5H978M964.5 339V357M953 348.5H964M964 348.5H978M964.5 357V372M978 360.5H998M1013.5 339V372M998 357.5H1013M1013 359.5H1040M1024.5 339V359M1024 348.5H1040M1028.5 359V372" stroke="#f8f8f8" stroke-width="1.2" fill="none"/><clipPath id="uc"><path d="M356 372 H656 V418 H600 V545 H392 V600 H356 Z"/></clipPath><path clip-path="url(#uc)" d="M480.5 372V600M356 501.5H480M356 445.5H480M434.5 372V445M356 400.5H434M387.5 372V400M414.5 372V400M414 383.5H434M389.5 400V445M356 428.5H389M356 410.5H389M368.5 400V410M376.5 410V428M376.5 428V445M389 430.5H434M408.5 400V430M389 415.5H408M408 416.5H434M420.5 400V416M420.5 416V430M434 417.5H480M434 402.5H480M458.5 372V402M434 383.5H458M446.5 372V383M446.5 383V402M458 384.5H480M459.5 402V417M446.5 402V417M453.5 417V445M434 428.5H453M453 427.5H480M468.5 417V427M468.5 427V445M437.5 445V501M383.5 445V501M383 480.5H437M403.5 445V480M383 467.5H403M383 457.5H403M403 467.5H437M423.5 445V467M423 457.5H437M416.5 467V480M412.5 480V501M396.5 480V501M383 490.5H396M396 490.5H412M412 490.5H437M424.5 480V490M425.5 490V501M437 464.5H480M456.5 445V464M440.5 501V600M356 537.5H440M392.5 501V537M356 520.5H392M372.5 520V537M407.5 501V537M392 519.5H407M407 519.5H440M426.5 501V519M419.5 519V537M398.5 537V600M356 578.5H398M356 554.5H398M382.5 537V554M370.5 537V554M373.5 554V578M356 564.5H373M373 564.5H398M385.5 554V564M386.5 564V578M398 575.5H440M398 556.5H440M416.5 537V556M428.5 537V556M413.5 575V600M398 585.5H413M413 586.5H440M440 546.5H480M440 530.5H480M453.5 501V530M440 512.5H453M453 514.5H480M467.5 501V514M440 580.5H480M458.5 580V600M440 590.5H458M458 590.5H480M480 500.5H656M596.5 372V500M480 437.5H596M556.5 372V437M480 403.5H556M520.5 372V403M505.5 372V403M480 383.5H505M493.5 383V403M480 393.5H493M493 393.5H505M505.5 403V437M480 415.5H505M493.5 403V415M480 427.5H505M493.5 415V427M493.5 427V437M535.5 403V437M535 426.5H556M535 413.5H556M556 411.5H596M556 385.5H596M574.5 385V411M556 396.5H574M574 401.5H596M583.5 411V437M556 424.5H583M569.5 411V424M570.5 424V437M583 423.5H596M537.5 437V500M480 461.5H537M499.5 437V461M480 447.5H499M505.5 461V500M480 480.5H505M493.5 461V480M493.5 480V500M480 490.5H493M493 490.5H505M505 475.5H537M517.5 461V475M537 469.5H596M561.5 437V469M537 454.5H561M549.5 437V454M561 456.5H596M575.5 437V456M565.5 469V500M537 487.5H565M553.5 487V500M565 488.5H596M583.5 469V488M582.5 488V500M596 425.5H656M596 469.5H656M616.5 425V469M596 449.5H616M596 439.5H616M596 459.5H616M616 447.5H656M635.5 425V447M616 436.5H635M635 435.5H656M642.5 447V469M616 457.5H642M628.5 457V469M642 459.5H656M625.5 469V500M596 485.5H625M608.5 469V485M608.5 485V500M625 482.5H656M637.5 469V482M638.5 482V500M549.5 500V600M480 567.5H549M480 524.5H549M549 546.5H656M591.5 500V546M610.5 546V600M610 574.5H656M636.5 546V574M610 562.5H636M624.5 546V562M633.5 574V600M610 590.5H633M633 589.5H656" stroke="#f7f7f7" stroke-width="1.2" fill="none"/><clipPath id="ud"><path d="M1040 175 L1100 130 H1125 L1170 180 L1195 235 L1260 270 L1280 285 L1276 310 L1230 318 V330 L1116 332 L1040 345 Z M1276 330 L1345 342 L1340 305 L1295 292 Z"/></clipPath><path clip-path="url(#ud)" d="M1149.5 130V345M1040 253.5H1149M1040 198.5H1149M1112.5 130V198M1040 158.5H1112M1070.5 130V158M1040 146.5H1070M1057.5 130V146M1040 138.5H1057M1059.5 146V158M1087.5 130V158M1070 145.5H1087M1077.5 158V198M1040 173.5H1077M1053.5 158V173M1063.5 158V173M1065.5 173V198M1040 190.5H1065M1053.5 173V190M1040 182.5H1053M1054.5 190V198M1065 182.5H1077M1065 190.5H1077M1077 177.5H1112M1098.5 158V177M1077 166.5H1098M1087.5 158V166M1087.5 166V177M1098 166.5H1112M1089.5 177V198M1077 189.5H1089M1089 187.5H1112M1100.5 177V187M1099.5 187V198M1112 163.5H1149M1112 151.5H1149M1125.5 130V151M1125 141.5H1149M1139.5 141V151M1128.5 151V163M1139.5 151V163M1112 178.5H1149M1132.5 163V178M1122.5 163V178M1124.5 178V198M1112 190.5H1124M1124 186.5H1149M1135.5 178V186M1134.5 186V198M1081.5 198V253M1040 220.5H1081M1066.5 198V220M1040 207.5H1066M1056.5 198V207M1055.5 207V220M1066 209.5H1081M1040 242.5H1081M1061.5 220V242M1040 230.5H1061M1051.5 220V230M1051.5 230V242M1061 234.5H1081M1071.5 220V234M1071.5 234V242M1057.5 242V253M1081 220.5H1149M1120.5 198V220M1134.5 198V220M1120 208.5H1134M1134 207.5H1149M1112.5 220V253M1081 232.5H1112M1093.5 220V232M1093.5 232V253M1081 240.5H1093M1093 244.5H1112M1112 242.5H1149M1131.5 220V242M1131 229.5H1149M1136.5 242V253M1122.5 242V253M1040 305.5H1149M1112.5 253V305M1077.5 253V305M1040 271.5H1077M1058.5 253V271M1040 263.5H1058M1058 263.5H1077M1077 284.5H1112M1077 264.5H1112M1096.5 253V264M1098.5 284V305M1077 295.5H1098M1088.5 284V295M1088.5 295V305M1098 292.5H1112M1112 288.5H1149M1112 277.5H1149M1136.5 253V277M1112 264.5H1136M1123.5 253V264M1122.5 264V277M1135.5 277V288M1125.5 277V288M1135.5 288V305M1125.5 288V305M1125 297.5H1135M1135 296.5H1149M1102.5 305V345M1081.5 305V345M1040 321.5H1081M1060.5 321V345M1040 333.5H1060M1050.5 333V345M1060 336.5H1081M1070.5 321V336M1071.5 336V345M1102 328.5H1149M1130.5 305V328M1102 314.5H1130M1117.5 305V314M1113.5 314V328M1130 318.5H1149M1127.5 328V345M1117.5 328V345M1102 336.5H1117M1117 336.5H1127M1139.5 328V345M1139 336.5H1149M1149 269.5H1345M1249.5 130V269M1149 182.5H1249M1200.5 130V182M1149 159.5H1200M1177.5 130V159M1149 149.5H1177M1166.5 130V149M1166 138.5H1177M1177 149.5H1200M1177 139.5H1200M1189.5 130V139M1187.5 139V149M1189.5 149V159M1180.5 159V182M1164.5 159V182M1164 174.5H1180M1180 168.5H1200M1190.5 159V168M1190.5 168V182M1200 154.5H1249M1218.5 130V154M1200 141.5H1218M1236.5 130V154M1236 145.5H1249M1226.5 154V182M1200 168.5H1226M1212.5 154V168M1210.5 168V182M1226 169.5H1249M1236.5 154V169M1236.5 169V182M1149 227.5H1249M1189.5 182V227M1149 198.5H1189M1169.5 182V198M1149 190.5H1169M1159.5 182V190M1159.5 190V198M1169 190.5H1189M1179.5 182V190M1179.5 190V198M1218.5 182V227M1195.5 227V269M1149 242.5H1195M1177.5 227V242M1167.5 227V242M1167.5 242V269M1149 255.5H1167M1167 259.5H1195M1185.5 242V259M1167 251.5H1185M1181.5 259V269M1218.5 227V269M1195 245.5H1218M1208.5 227V245M1208 237.5H1218M1195 255.5H1218M1205.5 245V255M1218 250.5H1249M1238.5 227V250M1218 236.5H1238M1228.5 227V236M1228.5 236V250M1233.5 250V269M1218 261.5H1233M1233 258.5H1249M1249 177.5H1345M1310.5 130V177M1279.5 130V177M1249 156.5H1279M1249 147.5H1279M1264.5 130V147M1249 138.5H1264M1259.5 147V156M1269.5 147V156M1262.5 156V177M1249 167.5H1262M1262 164.5H1279M1279 149.5H1310M1294.5 130V149M1279 141.5H1294M1294 139.5H1310M1279 160.5H1310M1292.5 149V160M1295.5 160V177M1279 169.5H1295M1295 169.5H1310M1310 161.5H1345M1310 145.5H1345M1332.5 130V145M1322.5 130V145M1326.5 145V161M1326 153.5H1345M1330.5 161V177M1310 169.5H1330M1320.5 161V169M1320.5 169V177M1330 169.5H1345M1249 234.5H1345M1300.5 177V234M1249 213.5H1300M1266.5 177V213M1249 201.5H1266M1266 195.5H1300M1288.5 177V195M1277.5 195V213M1266 203.5H1277M1287.5 195V213M1277 205.5H1287M1287 205.5H1300M1300 206.5H1345M1315.5 206V234M1315 221.5H1345M1326.5 221V234M1291.5 234V269M1324.5 234V269M1291 249.5H1324M1313.5 234V249M1303.5 234V249M1312.5 249V269M1291 261.5H1312M1302.5 249V261M1301.5 261V269M1312 257.5H1324M1324 249.5H1345M1335.5 234V249M1324 258.5H1345M1335.5 249V258M1335.5 258V269M1212.5 269V345M1149 303.5H1212M1192.5 269V303M1178.5 269V303M1171.5 303V345M1149 331.5H1171M1149 318.5H1171M1159.5 303V318M1159.5 331V345M1171 325.5H1212M1197.5 303V325M1171 317.5H1197M1185.5 303V317M1185.5 317V325M1197 317.5H1212M1198.5 325V345M1188.5 325V345M1171 336.5H1188M1198 334.5H1212M1271.5 269V345M1212 319.5H1271M1212 287.5H1271M1236.5 269V287M1222.5 269V287M1222 278.5H1236M1251.5 269V287M1236 277.5H1251M1251 277.5H1271M1261.5 269V277M1261.5 277V287M1233.5 287V319M1212 306.5H1233M1223.5 306V319M1233 301.5H1271M1247.5 287V301M1260.5 287V301M1247.5 301V319M1233 310.5H1247M1257.5 301V319M1247 310.5H1257M1257 309.5H1271M1233.5 319V345M1212 332.5H1233M1222.5 332V345M1246.5 319V345M1233 335.5H1246M1233 327.5H1246M1246 335.5H1271M1260.5 319V335M1246 327.5H1260M1260 327.5H1271M1261.5 335V345M1271 298.5H1345M1314.5 269V298M1291.5 269V298M1271 285.5H1291M1271 277.5H1291M1281.5 269V277M1281.5 277V285M1291 288.5H1314M1303.5 288V298M1314 287.5H1345M1326.5 287V298M1298.5 298V345M1271 325.5H1298M1271 313.5H1298M1284.5 298V313M1288.5 313V325M1286.5 325V345M1271 333.5H1286M1298 326.5H1345M1321.5 298V326M1298 308.5H1321M1309.5 298V308M1311.5 308V326M1298 316.5H1311M1311 316.5H1321M1321 317.5H1345M1332.5 317V326M1314.5 326V345M1324.5 326V345M1314 337.5H1324M1324 337.5H1345M1335.5 326V337M1334.5 337V345" stroke="#f9f9f9" stroke-width="1.2" fill="none"/><clipPath id="ue"><path d="M600 418 H690 V500 H1040 V560 H600 Z M392 545 H600 V640 H392 Z M640 560 H930 V728 H356 V665 H640 Z"/></clipPath><path clip-path="url(#ue)" d="M813.5 418V728M504.5 418V728M356 599.5H504M356 486.5H504M404.5 418V486M356 456.5H404M472.5 418V486M404 448.5H472M434.5 418V448M434.5 448V486M472 461.5H504M415.5 486V599M356 543.5H415M356 514.5H415M356 567.5H415M415 537.5H504M473.5 486V537M415 510.5H473M473 513.5H504M474.5 537V599M504 622.5H813M680.5 418V622M504 536.5H680M592.5 418V536M504 460.5H592M592 491.5H680M592 452.5H680M626.5 418V452M631.5 452V491M630.5 491V536M580.5 536V622M504 574.5H580M534.5 536V574M550.5 574V622M504 598.5H550M550 598.5H580M580 592.5H680M622.5 536V592M622 568.5H680M680 520.5H813M769.5 418V520M750.5 520V622M680 581.5H750M680 555.5H750M710.5 520V555M719.5 581V622M750 565.5H813M783.5 520V565M750 590.5H813M783.5 565V590M783.5 590V622M605.5 622V728M504 669.5H605M555.5 622V669M690.5 622V728M605 669.5H690M653.5 622V669M642.5 669V728M605 703.5H642M642 693.5H690M813 613.5H1040M813 532.5H1040M894.5 418V532M813 478.5H894M864.5 418V478M860.5 478V532M813 505.5H860M860 503.5H894M941.5 418V532M894 461.5H941M894 505.5H941M941 478.5H1040M999.5 418V478M941 442.5H999M999 448.5H1040M929.5 532V613M857.5 532V613M813 581.5H857M813 557.5H857M857 577.5H929M887.5 532V577M1004.5 532V613M1004 578.5H1040M950.5 613V728M950 658.5H1040M1005.5 613V658M996.5 658V728M950 686.5H996" stroke="#f6f6f6" stroke-width="1.2" fill="none"/><clipPath id="uf"><path d="M985 495 L1043 488 L1110 505 L1190 530 H1230 V728 H960 V640 H985 Z"/></clipPath><path clip-path="url(#uf)" d="M960 596.5H1230M1093.5 488V596M1023.5 488V596M960 540.5H1023M989.5 488V540M960 517.5H989M960 504.5H989M973.5 504V517M977.5 517V540M960 531.5H977M977 526.5H989M989 521.5H1023M989 506.5H1023M1008.5 506V521M998.5 506V521M1003.5 521V540M989 529.5H1003M1003 531.5H1023M1012.5 521V531M960 578.5H1023M999.5 540V578M960 559.5H999M975.5 540V559M960 549.5H975M983.5 559V578M983 568.5H999M999 559.5H1023M1011.5 540V559M999 549.5H1011M1009.5 559V578M999 568.5H1009M1009 570.5H1023M989.5 578V596M975.5 578V596M960 588.5H975M975 588.5H989M1001.5 578V596M989 586.5H1001M1023 547.5H1093M1069.5 488V547M1023 509.5H1069M1053.5 488V509M1034.5 488V509M1023 497.5H1034M1034 496.5H1053M1044.5 488V496M1043.5 496V509M1053 496.5H1069M1050.5 509V547M1023 522.5H1050M1023 536.5H1050M1037.5 522V536M1034.5 536V547M1050 523.5H1069M1059.5 509V523M1050 533.5H1069M1060.5 523V533M1059.5 533V547M1069 511.5H1093M1069 502.5H1093M1078.5 488V502M1078.5 502V511M1069 526.5H1093M1078.5 511V526M1079.5 526V547M1069 537.5H1079M1079 537.5H1093M1058.5 547V596M1023 571.5H1058M1042.5 547V571M1023 561.5H1042M1032.5 547V561M1033.5 561V571M1036.5 571V596M1023 583.5H1036M1036 581.5H1058M1049.5 571V581M1045.5 581V596M1058 570.5H1093M1070.5 547V570M1058 555.5H1070M1070 556.5H1093M1083.5 547V556M1082.5 556V570M1080.5 570V596M1058 584.5H1080M1071.5 570V584M1070.5 584V596M1080 583.5H1093M1148.5 488V596M1093 545.5H1148M1093 513.5H1148M1125.5 488V513M1114.5 488V513M1093 496.5H1114M1105.5 488V496M1105.5 496V513M1093 504.5H1105M1105 505.5H1114M1114 497.5H1125M1114 505.5H1125M1125 500.5H1148M1134.5 488V500M1134.5 500V513M1114.5 513V545M1093 532.5H1114M1093 522.5H1114M1102.5 513V522M1103.5 522V532M1103.5 532V545M1114 532.5H1148M1125.5 513V532M1114 521.5H1125M1136.5 513V532M1125 523.5H1136M1136 524.5H1148M1125.5 532V545M1135.5 532V545M1093 573.5H1148M1119.5 545V573M1093 556.5H1119M1119 563.5H1148M1138.5 545V563M1119 555.5H1138M1129.5 545V555M1129.5 555V563M1138 555.5H1148M1137.5 563V573M1128.5 573V596M1111.5 573V596M1093 583.5H1111M1102.5 573V583M1102.5 583V596M1111 583.5H1128M1128 584.5H1148M1139.5 573V584M1139.5 584V596M1148 534.5H1230M1183.5 488V534M1148 510.5H1183M1160.5 488V510M1148 502.5H1160M1160 497.5H1183M1174.5 488V497M1169.5 497V510M1170.5 510V534M1148 526.5H1170M1161.5 510V526M1148 518.5H1161M1161 518.5H1170M1157.5 526V534M1170 526.5H1183M1170 518.5H1183M1183 515.5H1230M1212.5 488V515M1183 505.5H1212M1196.5 488V505M1183 496.5H1196M1196 497.5H1212M1194.5 505V515M1203.5 505V515M1212 497.5H1230M1212 507.5H1230M1221.5 497V507M1221.5 507V515M1176.5 534V596M1148 560.5H1176M1148 543.5H1176M1162.5 534V543M1163.5 543V560M1148 551.5H1163M1163 551.5H1176M1148 584.5H1176M1163.5 560V584M1148 576.5H1163M1148 568.5H1163M1163 570.5H1176M1166.5 584V596M1157.5 584V596M1176 571.5H1230M1209.5 534V571M1176 550.5H1209M1193.5 534V550M1191.5 550V571M1176 561.5H1191M1191 562.5H1209M1200.5 550V562M1209 551.5H1230M1219.5 534V551M1209 543.5H1219M1219 542.5H1230M1209 563.5H1230M1219.5 551V563M1211.5 571V596M1198.5 571V596M1176 585.5H1198M1185.5 571V585M1189.5 585V596M1198 584.5H1211M1211 584.5H1230M1220.5 571V584M1221.5 584V596M1073.5 596V728M960 660.5H1073M1033.5 596V660M1003.5 596V660M960 624.5H1003M978.5 596V624M978 606.5H1003M993.5 596V606M987.5 606V624M987 614.5H1003M982.5 624V660M960 648.5H982M969.5 648V660M982 644.5H1003M982 633.5H1003M994.5 624V633M994.5 633V644M994.5 644V660M982 652.5H994M994 652.5H1003M1003 629.5H1033M1003 613.5H1033M1015.5 596V613M1003 604.5H1015M1015 605.5H1033M1024.5 596V605M1024.5 605V613M1023.5 613V629M1014.5 613V629M1003 621.5H1014M1014 621.5H1023M1023 621.5H1033M1033 619.5H1073M1055.5 596V619M1033 605.5H1055M1042.5 605V619M1055 605.5H1073M1064.5 596V605M1064.5 605V619M1033 640.5H1073M1050.5 619V640M1033 628.5H1050M1050 629.5H1073M1059.5 619V629M1064.5 629V640M1052.5 640V660M1033 651.5H1052M1043.5 640V651M1052 650.5H1073M1063.5 640V650M1064.5 650V660M1036.5 660V728M960 701.5H1036M986.5 660V701M960 681.5H986M971.5 660V681M960 670.5H971M971 673.5H986M974.5 681V701M960 691.5H974M974 691.5H986M1008.5 660V701M986 680.5H1008M986 670.5H1008M996.5 660V670M997.5 670V680M986 693.5H1008M995.5 680V693M998.5 693V701M1008 681.5H1036M1026.5 660V681M1008 672.5H1026M1017.5 660V672M1017.5 672V681M1026 672.5H1036M1022.5 681V701M1008 690.5H1022M1022 693.5H1036M992.5 701V728M981.5 701V728M960 715.5H981M972.5 701V715M969.5 715V728M981 717.5H992M1011.5 701V728M992 718.5H1011M992 709.5H1011M1001.5 701V709M1001.5 709V718M1001.5 718V728M1011 714.5H1036M1027.5 701V714M1020.5 714V728M1036 690.5H1073M1173.5 596V728M1073 676.5H1173M1131.5 596V676M1073 640.5H1131M1099.5 596V640M1073 615.5H1099M1089.5 596V615M1073 604.5H1089M1089 604.5H1099M1073 631.5H1099M1082.5 615V631M1073 623.5H1082M1082 623.5H1099M1083.5 631V640M1099 621.5H1131M1117.5 596V621M1099 611.5H1117M1108.5 596V611M1108.5 611V621M1117 613.5H1131M1117 605.5H1131M1094.5 640V676M1073 654.5H1094M1084.5 640V654M1073 662.5H1094M1082.5 654V662M1085.5 662V676M1094 656.5H1131M1115.5 640V656M1103.5 640V656M1094 648.5H1103M1103 648.5H1115M1115 648.5H1131M1117.5 656V676M1103.5 656V676M1094 664.5H1103M1103 664.5H1117M1117 666.5H1131M1131 626.5H1173M1131 643.5H1173M1155.5 626V643M1155 635.5H1173M1164.5 635V643M1146.5 643V676M1131 661.5H1146M1131 653.5H1146M1146 654.5H1173M1162.5 643V654M1116.5 676V728M1073 698.5H1116M1087.5 676V698M1104.5 676V698M1104 685.5H1116M1097.5 698V728M1073 710.5H1097M1088.5 698V710M1086.5 710V728M1073 718.5H1086M1086 720.5H1097M1097 710.5H1116M1106.5 698V710M1097 720.5H1116M1107.5 710V720M1107.5 720V728M1116 695.5H1173M1144.5 676V695M1129.5 676V695M1116 684.5H1129M1129 687.5H1144M1158.5 676V695M1144 687.5H1158M1158 686.5H1173M1146.5 695V728M1116 716.5H1146M1126.5 695V716M1116 703.5H1126M1126 708.5H1146M1135.5 695V708M1137.5 708V716M1127.5 716V728M1137.5 716V728M1146 713.5H1173M1160.5 695V713M1146 705.5H1160M1160 705.5H1173M1162.5 713V728M1173 663.5H1230M1173 623.5H1230M1210.5 596V623M1187.5 596V623M1173 613.5H1187M1173 605.5H1187M1187 609.5H1210M1196.5 596V609M1201.5 609V623M1210 612.5H1230M1221.5 596V612M1221 604.5H1230M1220.5 612V623M1205.5 623V663M1173 648.5H1205M1186.5 623V648M1173 638.5H1186M1186 639.5H1205M1196.5 623V639M1186 631.5H1196M1196 631.5H1205M1196.5 639V648M1192.5 648V663M1183.5 648V663M1205 649.5H1230M1205 640.5H1230M1216.5 623V640M1205 632.5H1216M1216 631.5H1230M1221.5 640V649M1220.5 649V663M1173 694.5H1230M1193.5 663V694M1173 678.5H1193M1182.5 663V678M1182.5 678V694M1173 686.5H1182M1182 686.5H1193M1218.5 663V694M1193 676.5H1218M1207.5 676V694M1193 685.5H1207M1218 683.5H1230M1218 671.5H1230M1203.5 694V728M1173 709.5H1203M1186.5 694V709M1193.5 709V728M1173 719.5H1193M1183.5 709V719M1182.5 719V728M1193 717.5H1203M1203 713.5H1230M1219.5 694V713M1203 705.5H1219M1219 702.5H1230M1218.5 713V728" stroke="#f9f9f9" stroke-width="1.2" fill="none"/><clipPath id="ug"><path d="M1230 560 H1350 V580 H1440 V728 H1230 Z"/></clipPath><path clip-path="url(#ug)" d="M1337.5 560V728M1230 663.5H1337M1230 629.5H1337M1275.5 560V629M1230 601.5H1275M1230 583.5H1275M1256.5 601V629M1230 615.5H1256M1244.5 601V615M1242.5 615V629M1256 611.5H1275M1275 602.5H1337M1298.5 560V602M1275 582.5H1298M1275 570.5H1298M1275 592.5H1298M1298 578.5H1337M1317.5 578V602M1298 588.5H1317M1317 592.5H1337M1295.5 602V629M1275 612.5H1295M1314.5 602V629M1295 614.5H1314M1314 619.5H1337M1273.5 629V663M1259.5 629V663M1230 644.5H1259M1247.5 629V644M1246.5 644V663M1259 647.5H1273M1290.5 663V728M1230 705.5H1290M1256.5 663V705M1230 685.5H1256M1230 673.5H1256M1242.5 663V673M1242.5 673V685M1244.5 685V705M1230 695.5H1244M1244 695.5H1256M1264.5 705V728M1250.5 705V728M1230 717.5H1250M1250 715.5H1264M1264 715.5H1290M1278.5 715V728M1290 696.5H1337M1321.5 663V696M1290 674.5H1321M1302.5 663V674M1309.5 674V696M1290 684.5H1309M1309.5 696V728M1290 709.5H1309M1309 710.5H1337M1323.5 696V710M1323.5 710V728M1337 647.5H1440M1337 604.5H1440M1386.5 560V604M1337 586.5H1386M1358.5 560V586M1337 572.5H1358M1363.5 586V604M1351.5 586V604M1415.5 560V604M1386 583.5H1415M1399.5 560V583M1386 573.5H1399M1399 570.5H1415M1401.5 583V604M1386 593.5H1401M1401 594.5H1415M1415 581.5H1440M1415 571.5H1440M1427.5 560V571M1415 594.5H1440M1427.5 581V594M1427.5 594V604M1380.5 604V647M1337 629.5H1380M1365.5 629V647M1353.5 629V647M1404.5 647V728M1337 697.5H1404M1377.5 697V728M1359.5 697V728M1337 716.5H1359M1359 708.5H1377M1359 718.5H1377M1377 710.5H1404M1391.5 697V710M1392.5 710V728M1404 685.5H1440M1404 704.5H1440M1426.5 685V704" stroke="#f9f9f9" stroke-width="1.2" fill="none"/><clipPath id="uh"><path d="M1440 600 H1530 V680 H1440 Z"/></clipPath><path clip-path="url(#uh)" d="M1440 631.5H1530M1480.5 600V631M1505.5 600V631M1480 615.5H1505M1505 613.5H1530M1479.5 631V680M1440 661.5H1479M1463.5 631V661M1440 644.5H1463M1463 647.5H1479M1462.5 661V680M1479 661.5H1530M1501.5 631V661M1501 644.5H1530M1505.5 661V680" stroke="#f8f8f8" stroke-width="1.2" fill="none"/><clipPath id="ui"><path d="M370 690 H520 V728 H362 Z"/></clipPath><path clip-path="url(#ui)" d="M451.5 690V728M416.5 690V728M389.5 690V728M362 708.5H389M373.5 690V708M362 697.5H373M373 698.5H389M381.5 690V698M381.5 698V708M373.5 708V728M362 716.5H373M373 717.5H389M381.5 708V717M381.5 717V728M389 712.5H416M404.5 690V712M389 704.5H404M389 697.5H404M404 699.5H416M405.5 712V728M389 719.5H405M397.5 712V719M397.5 719V728M416 709.5H451M433.5 690V709M416 699.5H433M425.5 690V699M424.5 699V709M429.5 709V728M416 717.5H429M438.5 709V728M429 720.5H438M438 717.5H451M490.5 690V728M490 712.5H520M501.5 690V712M490 701.5H501M501 697.5H520M509.5 690V697M509.5 697V712M501 704.5H509M509 705.5H520M507.5 712V728M490 721.5H507M498.5 712V721M499.5 721V728M507 721.5H520" stroke="#f8f8f8" stroke-width="1.2" fill="none"/><path d="M433 605 L494 602 L500 610 L436 612 Z" fill="url(#hat)"/><path d="M479 606 L539 558 L594 524 L686 505 L689 509 L597 528 L543 562 L484 610 Z" fill="url(#hat)"/><path d="M686 503 L770 466 L822 440 L864 430 L900 434 L940 438 L1000 456 L1052 479 L1116 497 L1150 499 L1202 478 L1277 470 L1354 452 L1403 448 L1440 418 L1452 424 L1410 455 L1356 461 L1280 479 L1206 488 L1156 509 L1112 508 L1046 493 L994 473 L936 458 L900 464 L860 468 L826 466 L780 480 L690 512 Z" fill="url(#hat)"/><path d="M436 486 L444 486 L442 596 L436 598 Z" fill="url(#hat)"/><path d="M1375 382 H1434 V400 L1444 402 L1416 425 L1381 423 L1369 398 C1368 388 1371 383 1375 382 Z" fill="url(#hat)"/><path d="M1494 272 L1520 262 L1532 240 L1566 222 L1570 196 L1600 170 L1640 152 L1650 130 L1668 108 L1700 108 L1700 150 L1690 200 L1660 240 L1700 250 L1750 256 L1748 268 L1690 276 L1600 290 L1560 300 L1520 282 Z" fill="url(#hat2)"/><path d="M1524 262 L1556 246 L1574 230 L1584 246 L1637 244 L1652 212 L1672 174 L1678 130 L1686 108 L1694 108 L1686 134 L1682 176 L1664 216 L1650 246 L1660 262 L1600 268 L1584 282 L1566 276 L1540 270 Z" fill="#d3d7d9"/><path d="M1347 310 l4 -8 l8 10 l10 -4 l8 6 l12 -8 l6 8 l12 2 l8 -10 l10 6 l6 -6 l14 10 l8 -4 l10 8 l14 -6 l-2 -12 l-12 -4 l2 -10 l16 -6 l8 -12 l20 -6 l14 -14 M1449.5 267 l8 6 l-2 12 l12 10 l16 6" stroke="#f8f8f8" stroke-width="1.3" fill="none"/><path d="M1100 369.4 L1186.7 368 L1221 339 L1285 307 M1396 438 C1420 470 1470 505 1526 520 C1600 535 1650 530 1690 520 C1740 500 1800 480 1876 475" stroke="#dedede" stroke-width="1" fill="none"/><path d="M1811 700 L1840 690 L1876 660 V728 H1800 Z" fill="#e5e9e6"/><path d="M1501 464.5 H1553 V533 M1501 465 L1492.5 472 L1492 479 L1495 486 L1499 490 L1512 488 L1534 489.5 L1538.5 482 L1539 475 L1546 471 L1553 470.5 M1495 486 L1488 490 L1481 500 M1553 533 L1560 536 L1590 540 L1620 534 L1655 538 L1680 526 L1700 505 L1698 480 M1700 505 L1740 492 L1770 496" stroke="#f8f8f8" stroke-width="1.2" fill="none"/><path d="M391 108 V545 M481.4 108 V728 M634.4 108 V372 M685.5 108 V345 M534.5 108 V250 M787 108 V360 M837 150 V345 M888 108 V418 M888.8 485 V728 M787 485 V728 M838.5 560 V728 M1043 360 V728 M686 501 V728 M1194 540 V728 M1295.4 500 V728 M1321.8 560 V700 M1395.8 560 V728 M1371 600 V700 M1117 520 V728 M1160 685 V728 M356 149.6 H1015 M356 251.8 H1004 M356 344 H948 M362 456.7 H592 M481 501 H686 M580 559.5 H1116 M736 611.7 H1073 M385 662 H600 M1226 616 H1400 M1226 560.6 H1348 M1226 639 H1500 M1226 664.3 H1520 M1000 585 H1073 M960 690 H1000 M356 369.8 H640 C650 369 655 356 686 354.8 H888 M391 544.3 H545 C560 545 565 559 580 559.5 M592 418 V590 C590 600 583 600 582.7 612 V728 M948 344 C1000 342 1060 338 1116 332 L1261.8 331.9 L1345.5 346.3 L1377 365 L1412 370.9 L1457 372 C1475 375 1485 385 1482.7 395.8 L1443 473.4 L1450 502.3 H1526 V605 L1497 615 H1396 M1526 605 L1542 590.8 L1677.7 589.7 L1721 571 L1775 569 L1822 554.7 L1854.6 524 L1862 493.3 L1876 482.5 M1822 554.7 L1876 590.8 M965.6 150 V260 L1040 360.6 " stroke="#ffffff" fill="none" stroke-linecap="round" stroke-linejoin="round" stroke-width="1.5"/><path d="M600 662.3 H891.7 L941.7 678.3 L983 696.7 L1000 704 M787.5 560 V728" stroke="#ffffff" fill="none" stroke-linecap="round" stroke-linejoin="round" stroke-width="2.6"/><path d="M730 150 L784.8 174 L879.5 176.9 C900 180 915 188 925.4 199.8 C932 210 934 220 934 228.5 L937 268.7 L947 337.6 L942.7 418 L938.4 470 L934 619 L933 640 M919.7 189.8 C940 178 955 176 965.6 171 C980 160 985 150 987 108 M643 108 L730 150 " stroke="#ffffff" fill="none" stroke-linecap="round" stroke-linejoin="round" stroke-width="5"/><path d="M356 655 L472.7 655.8 L539 656.7 C560 656 575 654 589 650 C610 644 625 638.5 640 637.8 H915 C935 640 950 655 965.6 663.4 C980 668 990 670 994.3 670.6 L1060 672 " stroke="#ffffff" fill="none" stroke-linecap="round" stroke-linejoin="round" stroke-width="6.4"/><path d="M377.7 545 C381 560 382.5 575 382.7 585 L381.8 626.7 L379.3 653 L372.7 676.7 L361 726.7 L356 740 M356 512.7 C366 525 374 535 377.7 545 " stroke="#ffffff" fill="none" stroke-linecap="round" stroke-linejoin="round" stroke-width="4.8"/><path d="M356 620 C366 630 372 640 374 650 L366 690 L356 705 M386 630 C388 645 400 652 430 654 M356 668 C370 664 380 660 400 660 L429 661.7 M366 660 C376 668 380 672 400 668 L440 660 M921 600 L925 625 L910 637 M945 600 L940 625 L955 655" stroke="#ffffff" fill="none" stroke-linecap="round" stroke-linejoin="round" stroke-width="2.2"/><path d="M1126 698 L1162 731" stroke="#ffffff" fill="none" stroke-linecap="round" stroke-linejoin="round" stroke-width="4.6"/><path d="M1166 706 L1142 731" stroke="#ffffff" fill="none" stroke-linecap="round" stroke-linejoin="round" stroke-width="2"/><circle cx="679" cy="771" r="77" fill="#bd0026" fill-opacity="0.9" stroke="#c02c10" stroke-width="1.5"/><circle cx="1081.4" cy="241.5" r="76.6" fill="#f03b20" fill-opacity="0.9" stroke="#d8391a" stroke-width="1.6"/><circle cx="1148.8" cy="608" r="76.6" fill="#f03b20" fill-opacity="0.9" stroke="#d8391a" stroke-width="1.6"/><circle cx="1062" cy="726" r="76.6" fill="#f03b20" fill-opacity="0.9" stroke="#d8391a" stroke-width="1.6"/><rect x="995.8" y="290.3" width="67" height="14.4" fill="#d33c13" stroke="#fbe3da" stroke-width="1"/><rect x="1062.6" y="656.3" width="67" height="14.4" fill="#d33c13" stroke="#fbe3da" stroke-width="1"/><path d="M1072.4 217 C1072.4 211 1076.7 208 1082.2 208 C1087.7 208 1092 211 1092 217 L1092 234.5 L1082.2 243 L1072.4 234.5 Z" fill="#0079c1"/><circle cx="1082.2" cy="218.2" r="4.4" fill="#fff"/><path d="M1139.2 582.3 C1139.2 576.3 1143.5 573.3 1149 573.3 C1154.5 573.3 1158.8 576.3 1158.8 582.3 L1158.8 599.8 L1149 608.3 L1139.2 599.8 Z" fill="#0079c1"/><circle cx="1149" cy="583.5" r="4.4" fill="#fff"/><path d="M1052 701 C1052 695 1056.3 692 1061.8 692 C1067.3 692 1071.6 695 1071.6 701 L1071.6 718.5 L1061.8 727 L1052 718.5 Z" fill="#0079c1"/><circle cx="1061.8" cy="702.2" r="4.4" fill="#fff"/></g></svg><span class="t" style="left:645.50px;top:184.12px;font-size:12.5px;letter-spacing:-0.148px;color:#fff;">0.75 miles</span><span class="t" style="left:712.30px;top:550.12px;font-size:12.5px;letter-spacing:-0.148px;color:#fff;">0.75 miles</span><span class="t" style="left:386.30px;top:35.17px;font-size:11.5px;letter-spacing:0.492px;color:#6e6e6e;">Patton</span><span class="t" style="left:455.50px;top:137.20px;font-size:13px;letter-spacing:0.709px;color:#6e6e6e;">Highland</span><span class="t" style="left:21.50px;top:241.15px;font-size:14px;letter-spacing:-0.141px;color:#6e6e6e;">San</span><span class="t" style="left:-1.50px;top:256.95px;font-size:14px;letter-spacing:0.800px;color:#6e6e6e;">Bernardino</span><span class="t" style="left:373.30px;top:237.11px;font-size:10.5px;letter-spacing:-0.472px;color:#9c9c9c;font-style:italic;">City Creek</span><span class="t" style="left:364.12px;top:286.21px;font-size:10.5px;letter-spacing:-0.562px;color:#858585;">San</span><span class="t" style="left:347.38px;top:297.71px;font-size:10.5px;letter-spacing:-0.037px;color:#858585;">Bernardino</span><span class="t" style="left:347.18px;top:309.01px;font-size:10.5px;letter-spacing:0.363px;color:#858585;">Int'l Airport</span><span class="t" style="left:250.17px;top:483.94px;font-size:12px;letter-spacing:0.331px;color:#6e6e6e;">North</span><span class="t" style="left:234.69px;top:496.84px;font-size:12px;letter-spacing:-0.122px;color:#6e6e6e;">Loma Linda</span><span class="t" style="left:843.05px;top:393.31px;font-size:10.5px;letter-spacing:-0.297px;color:#858585;">Redlands</span><span class="t" style="left:842.18px;top:404.81px;font-size:10.5px;letter-spacing:-0.040px;color:#858585;">Municipal</span><span class="t" style="left:847.63px;top:416.31px;font-size:10.5px;letter-spacing:0.366px;color:#858585;">Airport</span><span class="t" style="left:954.30px;top:498.24px;font-size:12px;letter-spacing:0.142px;color:#6e6e6e;">Mentone</span><span class="t" style="left:869.60px;top:552.24px;font-size:12px;letter-spacing:0.032px;color:#6e6e6e;">Warner</span><span class="t" style="left:1020.60px;top:554.84px;font-size:12px;letter-spacing:0.206px;color:#6e6e6e;">Crafton</span><span class="t" style="left:1185.42px;top:132.01px;font-size:10.5px;letter-spacing:0.044px;color:#9c9c9c;font-style:italic;">Seven</span><span class="t" style="left:1187.96px;top:143.41px;font-size:10.5px;letter-spacing:0.121px;color:#9c9c9c;font-style:italic;">Oaks</span><span class="t" style="left:1176.57px;top:154.31px;font-size:10.5px;letter-spacing:0.340px;color:#9c9c9c;font-style:italic;">Reservoir</span><span class="t" style="left:0.00px;top:524.09px;font-size:11px;letter-spacing:0.286px;color:#9c9c9c;font-style:italic;transform-origin:0 85%;transform:rotate(-23deg);">Santa Ana River</span><span class="t" style="left:489.00px;top:332.59px;font-size:11px;letter-spacing:0.420px;color:#9c9c9c;font-style:italic;transform-origin:0 85%;transform:rotate(-4deg);">Santa Ana River</span><span class="t" style="left:713.00px;top:370.09px;font-size:11px;letter-spacing:0.393px;color:#9c9c9c;font-style:italic;transform-origin:0 85%;transform:rotate(16deg);">Santa An</span><span class="t" style="left:761.00px;top:386.09px;font-size:11px;letter-spacing:0.165px;color:#9c9c9c;font-style:italic;transform-origin:0 85%;transform:rotate(-22deg);">a River</span><span class="t" style="left:1045.00px;top:341.09px;font-size:11px;letter-spacing:0.486px;color:#9c9c9c;font-style:italic;transform-origin:0 85%;transform:rotate(-38.5deg);">Santa Ana River</span><span class="t" style="left:656.00px;top:599.95px;font-size:14px;letter-spacing:-0.020px;color:#80868c;text-shadow:0 0 2px #f4e4e0,0 0 2px #f4e4e0,0 0 1px #f4e4e0;">Redlands</span><div class="abs" style="left:1475.2px;top:10.25px;width:29.5px;height:27.5px;background:rgba(248,248,248,0.55);border:1px solid #b8b8b8"><svg class="abs" style="left:-1px;top:-1px" width="30" height="28" viewBox="0 0 30 28"><g stroke="#595959" stroke-width="1.1" fill="none" stroke-width="0.9"><rect x="7.6" y="6.4" width="5.8" height="5.8"/><rect x="16.2" y="6.4" width="5.8" height="5.8"/><rect x="7.6" y="15" width="5.8" height="5.8"/><rect x="16.2" y="15" width="5.8" height="5.8"/><path d="M8.6 7.4 L12.4 11.2 M21 7.4 L17.2 11.2 M8.8 18.4 L10.2 19.8 L12.6 16.2 M17.4 16 L21 19.8 M17.4 19.6 L19 17.8"/></g></svg></div><div class="abs" style="left:1475.2px;top:50.25px;width:29.5px;height:27.5px;background:rgba(248,248,248,0.55);border:1px solid #b8b8b8"><svg class="abs" style="left:-1px;top:-1px" width="30" height="28" viewBox="0 0 30 28"><path d="M15 6 V22 M7 14 H23" stroke="#595959" stroke-width="1.1" fill="none"/></svg></div><div class="abs" style="left:1489.2px;top:77.5px;width:1.6px;height:65px;background:#b4b4b4"></div><svg class="abs" style="left:1492px;top:104.6px" width="20" height="12" viewBox="0 0 20 12"><path d="M0.6 5.6 L5.6 0.8 H18.6 V10.4 H5.6 Z" fill="#fff" stroke="#d0d0d0" stroke-width="0.8"/></svg><div class="abs" style="left:1475.2px;top:142.25px;width:29.5px;height:27.5px;background:rgba(248,248,248,0.55);border:1px solid #b8b8b8"><svg class="abs" style="left:-1px;top:-1px" width="30" height="28" viewBox="0 0 30 28"><path d="M7 14 H23" stroke="#595959" stroke-width="1.1" fill="none"/></svg></div><div class="abs" style="left:1475.2px;top:180.25px;width:29.5px;height:27.5px;background:rgba(248,248,248,0.55);border:1px solid #b8b8b8"><svg class="abs" style="left:-1px;top:-1px" width="30" height="28" viewBox="0 0 30 28"><path d="M7.6 13.6 L15 6.4 L17.4 8.8 V7.2 H19.6 V10.8 L22.4 13.6 M9.4 12 V21.6 H13.2 V16 H16.8 V21.6 H20.6 V12" stroke="#595959" stroke-width="1.1" fill="none"/></svg></div><div class="abs" style="left:1475.2px;top:218.25px;width:29.5px;height:27.5px;background:rgba(248,248,248,0.55);border:1px solid #b8b8b8"><svg class="abs" style="left:-1px;top:-1px" width="30" height="28" viewBox="0 0 30 28"><circle cx="15" cy="14" r="6.6" stroke="#595959" stroke-width="1.1" fill="none"/><path d="M15 7.4 V11 M15 17 V20.6 M8.4 14 H12 M18 14 H21.6" stroke="#595959" stroke-width="1.1" fill="none"/></svg></div></div>
<div id="tools"><div class="tb" style="top:6.25px;background:#f8f8f8"><svg class="abs" style="left:-1px;top:-1px" width="31" height="31" viewBox="0 0 31 31"><path d="M11.2 12.2 C11.2 9.4 13 8.2 15.4 8.2 C17.8 8.2 19.6 9.4 19.6 12.2 L19.6 19.8 L15.4 24 L11.2 19.8 Z" stroke="#595959" stroke-width="1.1" fill="none"/><circle cx="15.4" cy="12.6" r="2.2" stroke="#595959" stroke-width="1.1" fill="none"/></svg></div><div class="tb" style="top:43.25px;background:#8e8e8e"><svg class="abs" style="left:-1px;top:-1px" width="31" height="31" viewBox="0 0 31 31"><path d="M11.6 17.2 L8.6 14 C7.8 13 9 11.8 10 12.8 L12.4 15.2 M12.4 15.2 L10.4 9.2 C10 7.8 11.8 7.4 12.2 8.6 L13.8 13 M13.8 13 L13 7.4 C12.8 6 14.8 5.8 15 7.2 L15.8 12.6 M15.8 12.6 L16.2 7.6 C16.4 6.2 18.2 6.4 18.2 7.8 L18 13.4 M18 13.4 L19.4 10.2 C20 9 21.6 9.6 21.2 11 L19.8 16.4 C19.4 18.4 20.2 20.4 21.2 22.4 M11.6 17.2 C12.6 19.4 13.2 21.4 13 23.6 " stroke="#fff" stroke-width="1.1" fill="none" stroke-linejoin="round" stroke-linecap="round"/></svg></div><div class="tb" style="top:80.25px;background:#f8f8f8"><svg class="abs" style="left:-1px;top:-1px" width="31" height="31" viewBox="0 0 31 31"><path d="M11.2 6 L11.2 21.4 L14.6 18.2 L17.2 24.2 L19.6 23.2 L17 17.4 L21.8 17.2 Z" stroke="#595959" stroke-width="1.1" fill="none" stroke-linejoin="miter"/></svg></div><div class="tb" style="top:117.25px;background:#f8f8f8"><svg class="abs" style="left:-1px;top:-1px" width="31" height="31" viewBox="0 0 31 31"><circle cx="13.2" cy="12.6" r="5.4" stroke="#595959" stroke-width="1.1" fill="none"/><path d="M10.4 12.6 H16 M13.2 9.8 V15.4" stroke="#595959" stroke-width="1.1" fill="none"/><path d="M17.2 16.4 L22.4 21.4 L21 22.8 L16 17.8" stroke="#595959" stroke-width="1.1" fill="none"/></svg></div><div class="tb" style="top:154.25px;background:#f8f8f8"><svg class="abs" style="left:-1px;top:-1px" width="31" height="31" viewBox="0 0 31 31"><circle cx="13.2" cy="12.6" r="5.4" stroke="#595959" stroke-width="1.1" fill="none"/><path d="M10.4 12.6 H16" stroke="#595959" stroke-width="1.1" fill="none"/><path d="M17.2 16.4 L22.4 21.4 L21 22.8 L16 17.8" stroke="#595959" stroke-width="1.1" fill="none"/></svg></div><div class="tb" style="top:191.25px;background:#f8f8f8"><svg class="abs" style="left:-1px;top:-1px" width="31" height="31" viewBox="0 0 31 31"><path d="M8.6 8.2 H22.8 V13 H13.4 V23.8 H8.6 Z" stroke="#595959" stroke-width="1.1" fill="none"/><path d="M11.6 8.2 v2.4 M14.4 8.2 v3 M17.2 8.2 v2.4 M20 8.2 v3 M8.6 14.4 h2.4 M8.6 17.2 h3 M8.6 20 h2.4" stroke="#595959" stroke-width="1.1" fill="none"/></svg></div><div class="tb" style="top:228.25px;background:#f8f8f8"><svg class="abs" style="left:-1px;top:-1px" width="31" height="31" viewBox="0 0 31 31"><path d="M21 9.8 V7.6 H8.6 V20.6 H12.4" stroke="#595959" stroke-width="1.1" fill="none"/><path d="M12.8 24.2 L17.6 10.6 L22.6 24.2 M14.6 19.6 H20.6 M11.6 24.3 H14.6 M20.4 24.3 H23.8" stroke="#595959" stroke-width="1.2" fill="none"/></svg></div><div class="tb" style="top:280.25px;background:#f8f8f8"><svg class="abs" style="left:-1px;top:-1px" width="31" height="31" viewBox="0 0 31 31"><circle cx="15.4" cy="15.4" r="7.2" stroke="#595959" stroke-width="1.1" fill="none"/><path d="M11.8 11.8 L19 19 M19 11.8 L11.8 19" stroke="#595959" stroke-width="1.1" fill="none"/></svg></div><div class="tb" style="top:317.25px;background:#f8f8f8"><svg class="abs" style="left:-1px;top:-1px" width="31" height="31" viewBox="0 0 31 31"><path d="M14.6 9.6 H9.4 V22.4 H21.8 V17.4" stroke="#595959" stroke-width="1.1" fill="none"/><path d="M15 18.2 C15 13.6 17.6 11.4 22.6 11.4 M19.6 8.2 L22.8 11.4 L19.6 14.6" stroke="#595959" stroke-width="1.1" fill="none"/></svg></div><div class="tb" style="top:354.25px;background:#f8f8f8"><svg class="abs" style="left:-1px;top:-1px" width="31" height="31" viewBox="0 0 31 31"><path d="M22.2 16.4 V12 L18 7.6 H9.4 V22.6 H16.2" stroke="#595959" stroke-width="1.1" fill="none"/><path d="M18 7.6 V12 H22.2" stroke="#595959" stroke-width="1.1" fill="none"/><path d="M12 19.6 C14.8 17.6 15.8 14.6 15.2 11.8 C16 15.4 17.6 17.4 20 17.8 C17 17.6 14.4 18.4 12 19.6 Z" stroke="#595959" stroke-width="1.1" fill="none" stroke-width="0.9"/><path d="M17.4 21 H23.8 M20.6 17.8 V24.2" stroke="#595959" stroke-width="1.1" fill="none"/></svg></div><div class="tb" style="top:391.25px;background:#f8f8f8"><svg class="abs" style="left:-1px;top:-1px" width="31" height="31" viewBox="0 0 31 31"><path d="M13.4 10.6 H22.8 M13.4 15 H22.8 M13.4 19.4 H22.8" stroke="#595959" stroke-width="1.1" fill="none"/><path d="M9 9.6 h2.2 v2.2 h-2.2 Z M9 14 h2.2 v2.2 h-2.2 Z M9 18.4 h2.2 v2.2 h-2.2 Z" stroke="#595959" stroke-width="1.1" fill="none" stroke-width="0.9"/></svg></div><div class="tb" style="top:443.25px;background:#f8f8f8"><svg class="abs" style="left:-1px;top:-1px" width="31" height="31" viewBox="0 0 31 31"><path d="M9 21.6 V17 L10.8 12.6 H18.6 L20.4 17 V21.6 H17.8 V20 H11.6 V21.6 Z" stroke="#595959" stroke-width="1.1" fill="none" fill="#f8f8f8"/><path d="M9 17 H20.4 M10.4 16 H19" stroke="#595959" stroke-width="1.1" fill="none"/><path d="M14 11 L15 8.8 H21.4 L23.4 13 V18.6 H21.2" stroke="#595959" stroke-width="1.1" fill="none"/><circle cx="11.4" cy="18.4" r="0.8" fill="#595959"/><circle cx="18" cy="18.4" r="0.8" fill="#595959"/></svg></div><div class="tb" style="top:480.25px;background:#f8f8f8"><svg class="abs" style="left:-1px;top:-1px" width="31" height="31" viewBox="0 0 31 31"><path d="M9 8.4 H22.2 V14.4 H19.8 V17 H17.2 V19.6 H14.6 V22 H12 L10.4 23.6 V22 H9 Z" stroke="#595959" stroke-width="1.1" fill="none"/></svg></div><div class="abs" style="left:6px;top:269px;width:29px;height:1px;background:#e6e6e6"></div><div class="abs" style="left:6px;top:432px;width:29px;height:1px;background:#e6e6e6"></div></div>
<div id="results"><div class="abs" style="left:0px;top:0px;width:1520px;height:1px;background:#d0d0d0;"></div><div class="abs" style="left:0px;top:26px;width:1520px;height:1px;background:#dcdcdc;"></div><svg class="abs" style="left:3px;top:7px" width="16" height="13" viewBox="0 0 16 13"><path d="M1 1 L7.6 6.4 L14.2 1 M1 6 L7.6 11.4 L14.2 6" fill="none" stroke="#5a5a5a" stroke-width="1.1"/></svg><span class="t" style="left:700.89px;top:7.42px;font-size:12.5px;letter-spacing:-0.214px;color:#4c4c4c;">Suitability Analysis Results</span><div class="abs" style="left:0px;top:27px;width:1520px;height:45.6px;background:#efefef;"></div><div class="abs" style="left:294.4px;top:28px;width:1px;height:44.6px;background:#d8d8d8;"></div><div class="abs" style="left:368.4px;top:28px;width:1px;height:44.6px;background:#d8d8d8;"></div><div class="abs" style="left:428.4px;top:28px;width:1px;height:44.6px;background:#d8d8d8;"></div><div class="abs" style="left:519.3px;top:28px;width:1px;height:44.6px;background:#d8d8d8;"></div><div class="abs" style="left:522.5px;top:28px;width:978.5px;height:1px;background:#d8d8d8;"></div><div class="abs" style="left:522.5px;top:49.3px;width:978.5px;height:1px;background:#d8d8d8;"></div><div class="abs" style="left:522.5px;top:71px;width:978.5px;height:1px;background:#d8d8d8;"></div><div class="abs" style="left:522.2px;top:28px;width:1px;height:44px;background:#d8d8d8;"></div><div class="abs" style="left:848.3px;top:28px;width:1px;height:44px;background:#d8d8d8;"></div><div class="abs" style="left:1174.4px;top:28px;width:1px;height:44px;background:#d8d8d8;"></div><div class="abs" style="left:1500.5px;top:28px;width:1px;height:44px;background:#d8d8d8;"></div><div class="abs" style="left:630.9px;top:49.3px;width:1px;height:22px;background:#d8d8d8;"></div><div class="abs" style="left:739.6px;top:49.3px;width:1px;height:22px;background:#d8d8d8;"></div><div class="abs" style="left:957px;top:49.3px;width:1px;height:22px;background:#d8d8d8;"></div><div class="abs" style="left:1065.7px;top:49.3px;width:1px;height:22px;background:#d8d8d8;"></div><div class="abs" style="left:1283.1px;top:49.3px;width:1px;height:22px;background:#d8d8d8;"></div><div class="abs" style="left:1391.8px;top:49.3px;width:1px;height:22px;background:#d8d8d8;"></div><span class="t" style="left:6.20px;top:55.42px;font-size:12.5px;letter-spacing:-0.262px;color:#4c4c4c;">Site</span><span class="t" style="left:306.00px;top:54.22px;font-size:12.5px;letter-spacing:-0.148px;color:#4c4c4c;">0.75 miles</span><span class="t" style="left:385.60px;top:55.42px;font-size:12.5px;letter-spacing:-0.722px;color:#4c4c4c;">Rank</span><span class="t" style="left:432.50px;top:55.42px;font-size:12.5px;letter-spacing:-0.304px;color:#4c4c4c;">Final score</span><svg class="abs" style="left:500.4px;top:60px" width="9" height="6"><path d="M0.4 0.3 L7.8 0.3 L4.1 4.4 Z" fill="#222"/></svg><span class="t" style="left:559.22px;top:33.02px;font-size:12.5px;letter-spacing:-0.064px;color:#4c4c4c;">2022 Pop Age 25+: Grad/Professional Degree</span><span class="t" style="left:561.45px;top:55.42px;font-size:12.5px;letter-spacing:-0.209px;color:#4c4c4c;">Value</span><span class="t" style="left:669.74px;top:55.42px;font-size:12.5px;letter-spacing:-0.411px;color:#4c4c4c;">Score</span><span class="t" style="left:750.93px;top:55.42px;font-size:12.5px;letter-spacing:-0.045px;color:#4c4c4c;">Weighted score</span><span class="t" style="left:940.31px;top:33.02px;font-size:12.5px;letter-spacing:-0.074px;color:#4c4c4c;">2022 Median Home Value</span><span class="t" style="left:887.55px;top:55.42px;font-size:12.5px;letter-spacing:-0.209px;color:#4c4c4c;">Value</span><span class="t" style="left:995.84px;top:55.42px;font-size:12.5px;letter-spacing:-0.411px;color:#4c4c4c;">Score</span><span class="t" style="left:1077.03px;top:55.42px;font-size:12.5px;letter-spacing:-0.045px;color:#4c4c4c;">Weighted score</span><span class="t" style="left:1288.24px;top:33.02px;font-size:12.5px;letter-spacing:0.079px;color:#4c4c4c;">2022 Median Age</span><span class="t" style="left:1213.65px;top:55.42px;font-size:12.5px;letter-spacing:-0.209px;color:#4c4c4c;">Value</span><span class="t" style="left:1321.94px;top:55.42px;font-size:12.5px;letter-spacing:-0.411px;color:#4c4c4c;">Score</span><span class="t" style="left:1403.13px;top:55.42px;font-size:12.5px;letter-spacing:-0.045px;color:#4c4c4c;">Weighted score</span><div class="abs" style="left:0px;top:83.8px;width:1501px;height:44.1px;background:#ffffff;"></div><div class="abs" style="left:0px;top:127.9px;width:1501px;height:44.1px;background:#f3f3f3;"></div><div class="abs" style="left:0px;top:172px;width:1501px;height:44.1px;background:#ffffff;"></div><div class="abs" style="left:0px;top:216.1px;width:1501px;height:44.1px;background:#f3f3f3;"></div><div class="abs" style="left:0px;top:260.2px;width:1501px;height:44.1px;background:#ffffff;"></div><div class="abs" style="left:0px;top:127.4px;width:1501px;height:1px;background:#d8d8d8;"></div><div class="abs" style="left:294.4px;top:83.8px;width:1px;height:44.1px;background:#d8d8d8;"></div><div class="abs" style="left:368.4px;top:83.8px;width:1px;height:44.1px;background:#d8d8d8;"></div><div class="abs" style="left:428.4px;top:83.8px;width:1px;height:44.1px;background:#d8d8d8;"></div><div class="abs" style="left:519.3px;top:83.8px;width:1px;height:44.1px;background:#d8d8d8;"></div><div class="abs" style="left:522.2px;top:83.8px;width:1px;height:44.1px;background:#d8d8d8;"></div><div class="abs" style="left:630.9px;top:83.8px;width:1px;height:44.1px;background:#d8d8d8;"></div><div class="abs" style="left:739.6px;top:83.8px;width:1px;height:44.1px;background:#d8d8d8;"></div><div class="abs" style="left:848.3px;top:83.8px;width:1px;height:44.1px;background:#d8d8d8;"></div><div class="abs" style="left:957px;top:83.8px;width:1px;height:44.1px;background:#d8d8d8;"></div><div class="abs" style="left:1065.7px;top:83.8px;width:1px;height:44.1px;background:#d8d8d8;"></div><div class="abs" style="left:1174.4px;top:83.8px;width:1px;height:44.1px;background:#d8d8d8;"></div><div class="abs" style="left:1283.1px;top:83.8px;width:1px;height:44.1px;background:#d8d8d8;"></div><div class="abs" style="left:1391.8px;top:83.8px;width:1px;height:44.1px;background:#d8d8d8;"></div><div class="abs" style="left:1500.5px;top:83.8px;width:1px;height:44.1px;background:#d8d8d8;"></div><span class="t" style="left:6.20px;top:101.12px;font-size:12.5px;letter-spacing:-0.111px;color:#4c4c4c;">Candidate 5</span><span class="t" style="left:306.00px;top:100.22px;font-size:12.5px;letter-spacing:-0.148px;color:#4c4c4c;">0.75 miles</span><span class="t" style="left:394.82px;top:101.12px;font-size:12.5px;letter-spacing:-0.353px;color:#4c4c4c;">1</span><span class="t" style="left:452.37px;top:100.32px;font-size:12.5px;letter-spacing:-0.361px;color:#4c4c4c;">0.97</span><div class="abs" style="left:494.4px;top:95.5px;width:19.4px;height:19.2px;background:#bd0026;border:1px solid rgba(90,70,70,0.38)"></div><span class="t" style="left:561.64px;top:101.12px;font-size:12.5px;letter-spacing:-0.366px;color:#4c4c4c;">1,812</span><span class="t" style="left:673.62px;top:101.12px;font-size:12.5px;letter-spacing:-0.361px;color:#4c4c4c;">1.00</span><span class="t" style="left:782.32px;top:101.12px;font-size:12.5px;letter-spacing:-0.361px;color:#4c4c4c;">0.20</span><span class="t" style="left:877.89px;top:101.12px;font-size:12.5px;letter-spacing:-0.374px;color:#4c4c4c;">$445,988</span><span class="t" style="left:999.72px;top:101.12px;font-size:12.5px;letter-spacing:-0.361px;color:#4c4c4c;">1.00</span><span class="t" style="left:1108.42px;top:101.12px;font-size:12.5px;letter-spacing:-0.361px;color:#4c4c4c;">0.60</span><span class="t" style="left:1217.12px;top:101.12px;font-size:12.5px;letter-spacing:-0.361px;color:#4c4c4c;">36.6</span><span class="t" style="left:1325.82px;top:101.12px;font-size:12.5px;letter-spacing:-0.361px;color:#4c4c4c;">0.83</span><span class="t" style="left:1434.52px;top:101.12px;font-size:12.5px;letter-spacing:-0.361px;color:#4c4c4c;">0.17</span><div class="abs" style="left:0px;top:171.5px;width:1501px;height:1px;background:#d8d8d8;"></div><div class="abs" style="left:294.4px;top:127.9px;width:1px;height:44.1px;background:#d8d8d8;"></div><div class="abs" style="left:368.4px;top:127.9px;width:1px;height:44.1px;background:#d8d8d8;"></div><div class="abs" style="left:428.4px;top:127.9px;width:1px;height:44.1px;background:#d8d8d8;"></div><div class="abs" style="left:519.3px;top:127.9px;width:1px;height:44.1px;background:#d8d8d8;"></div><div class="abs" style="left:522.2px;top:127.9px;width:1px;height:44.1px;background:#d8d8d8;"></div><div class="abs" style="left:630.9px;top:127.9px;width:1px;height:44.1px;background:#d8d8d8;"></div><div class="abs" style="left:739.6px;top:127.9px;width:1px;height:44.1px;background:#d8d8d8;"></div><div class="abs" style="left:848.3px;top:127.9px;width:1px;height:44.1px;background:#d8d8d8;"></div><div class="abs" style="left:957px;top:127.9px;width:1px;height:44.1px;background:#d8d8d8;"></div><div class="abs" style="left:1065.7px;top:127.9px;width:1px;height:44.1px;background:#d8d8d8;"></div><div class="abs" style="left:1174.4px;top:127.9px;width:1px;height:44.1px;background:#d8d8d8;"></div><div class="abs" style="left:1283.1px;top:127.9px;width:1px;height:44.1px;background:#d8d8d8;"></div><div class="abs" style="left:1391.8px;top:127.9px;width:1px;height:44.1px;background:#d8d8d8;"></div><div class="abs" style="left:1500.5px;top:127.9px;width:1px;height:44.1px;background:#d8d8d8;"></div><span class="t" style="left:6.20px;top:145.22px;font-size:12.5px;letter-spacing:-0.111px;color:#4c4c4c;">Candidate 3</span><span class="t" style="left:306.00px;top:144.32px;font-size:12.5px;letter-spacing:-0.148px;color:#4c4c4c;">0.75 miles</span><span class="t" style="left:394.82px;top:145.22px;font-size:12.5px;letter-spacing:-0.353px;color:#4c4c4c;">2</span><span class="t" style="left:452.37px;top:144.42px;font-size:12.5px;letter-spacing:-0.361px;color:#4c4c4c;">0.74</span><div class="abs" style="left:494.4px;top:139.6px;width:19.4px;height:19.2px;background:#f03b20;border:1px solid rgba(90,70,70,0.38)"></div><span class="t" style="left:561.64px;top:145.22px;font-size:12.5px;letter-spacing:-0.366px;color:#4c4c4c;">1,232</span><span class="t" style="left:673.62px;top:145.22px;font-size:12.5px;letter-spacing:-0.361px;color:#4c4c4c;">0.14</span><span class="t" style="left:782.32px;top:145.22px;font-size:12.5px;letter-spacing:-0.361px;color:#4c4c4c;">0.03</span><span class="t" style="left:877.89px;top:145.22px;font-size:12.5px;letter-spacing:-0.374px;color:#4c4c4c;">$473,469</span><span class="t" style="left:999.72px;top:145.22px;font-size:12.5px;letter-spacing:-0.361px;color:#4c4c4c;">0.86</span><span class="t" style="left:1108.42px;top:145.22px;font-size:12.5px;letter-spacing:-0.361px;color:#4c4c4c;">0.52</span><span class="t" style="left:1217.12px;top:145.22px;font-size:12.5px;letter-spacing:-0.361px;color:#4c4c4c;">39.1</span><span class="t" style="left:1325.82px;top:145.22px;font-size:12.5px;letter-spacing:-0.361px;color:#4c4c4c;">0.99</span><span class="t" style="left:1434.52px;top:145.22px;font-size:12.5px;letter-spacing:-0.361px;color:#4c4c4c;">0.20</span><div class="abs" style="left:0px;top:215.6px;width:1501px;height:1px;background:#d8d8d8;"></div><div class="abs" style="left:294.4px;top:172px;width:1px;height:44.1px;background:#d8d8d8;"></div><div class="abs" style="left:368.4px;top:172px;width:1px;height:44.1px;background:#d8d8d8;"></div><div class="abs" style="left:428.4px;top:172px;width:1px;height:44.1px;background:#d8d8d8;"></div><div class="abs" style="left:519.3px;top:172px;width:1px;height:44.1px;background:#d8d8d8;"></div><div class="abs" style="left:522.2px;top:172px;width:1px;height:44.1px;background:#d8d8d8;"></div><div class="abs" style="left:630.9px;top:172px;width:1px;height:44.1px;background:#d8d8d8;"></div><div class="abs" style="left:739.6px;top:172px;width:1px;height:44.1px;background:#d8d8d8;"></div><div class="abs" style="left:848.3px;top:172px;width:1px;height:44.1px;background:#d8d8d8;"></div><div class="abs" style="left:957px;top:172px;width:1px;height:44.1px;background:#d8d8d8;"></div><div class="abs" style="left:1065.7px;top:172px;width:1px;height:44.1px;background:#d8d8d8;"></div><div class="abs" style="left:1174.4px;top:172px;width:1px;height:44.1px;background:#d8d8d8;"></div><div class="abs" style="left:1283.1px;top:172px;width:1px;height:44.1px;background:#d8d8d8;"></div><div class="abs" style="left:1391.8px;top:172px;width:1px;height:44.1px;background:#d8d8d8;"></div><div class="abs" style="left:1500.5px;top:172px;width:1px;height:44.1px;background:#d8d8d8;"></div><span class="t" style="left:6.20px;top:189.32px;font-size:12.5px;letter-spacing:-0.111px;color:#4c4c4c;">Candidate 1</span><span class="t" style="left:306.00px;top:188.42px;font-size:12.5px;letter-spacing:-0.148px;color:#4c4c4c;">0.75 miles</span><span class="t" style="left:394.82px;top:189.32px;font-size:12.5px;letter-spacing:-0.353px;color:#4c4c4c;">3</span><span class="t" style="left:452.37px;top:188.52px;font-size:12.5px;letter-spacing:-0.361px;color:#4c4c4c;">0.72</span><div class="abs" style="left:494.4px;top:183.7px;width:19.4px;height:19.2px;background:#f03b20;border:1px solid rgba(90,70,70,0.38)"></div><span class="t" style="left:561.64px;top:189.32px;font-size:12.5px;letter-spacing:-0.366px;color:#4c4c4c;">1,267</span><span class="t" style="left:673.62px;top:189.32px;font-size:12.5px;letter-spacing:-0.361px;color:#4c4c4c;">0.19</span><span class="t" style="left:782.32px;top:189.32px;font-size:12.5px;letter-spacing:-0.361px;color:#4c4c4c;">0.04</span><span class="t" style="left:877.89px;top:189.32px;font-size:12.5px;letter-spacing:-0.374px;color:#4c4c4c;">$480,365</span><span class="t" style="left:999.72px;top:189.32px;font-size:12.5px;letter-spacing:-0.361px;color:#4c4c4c;">0.83</span><span class="t" style="left:1108.42px;top:189.32px;font-size:12.5px;letter-spacing:-0.361px;color:#4c4c4c;">0.50</span><span class="t" style="left:1217.12px;top:189.32px;font-size:12.5px;letter-spacing:-0.361px;color:#4c4c4c;">40.1</span><span class="t" style="left:1325.82px;top:189.32px;font-size:12.5px;letter-spacing:-0.361px;color:#4c4c4c;">0.92</span><span class="t" style="left:1434.52px;top:189.32px;font-size:12.5px;letter-spacing:-0.361px;color:#4c4c4c;">0.18</span><div class="abs" style="left:0px;top:259.7px;width:1501px;height:1px;background:#d8d8d8;"></div><div class="abs" style="left:294.4px;top:216.1px;width:1px;height:44.1px;background:#d8d8d8;"></div><div class="abs" style="left:368.4px;top:216.1px;width:1px;height:44.1px;background:#d8d8d8;"></div><div class="abs" style="left:428.4px;top:216.1px;width:1px;height:44.1px;background:#d8d8d8;"></div><div class="abs" style="left:519.3px;top:216.1px;width:1px;height:44.1px;background:#d8d8d8;"></div><div class="abs" style="left:522.2px;top:216.1px;width:1px;height:44.1px;background:#d8d8d8;"></div><div class="abs" style="left:630.9px;top:216.1px;width:1px;height:44.1px;background:#d8d8d8;"></div><div class="abs" style="left:739.6px;top:216.1px;width:1px;height:44.1px;background:#d8d8d8;"></div><div class="abs" style="left:848.3px;top:216.1px;width:1px;height:44.1px;background:#d8d8d8;"></div><div class="abs" style="left:957px;top:216.1px;width:1px;height:44.1px;background:#d8d8d8;"></div><div class="abs" style="left:1065.7px;top:216.1px;width:1px;height:44.1px;background:#d8d8d8;"></div><div class="abs" style="left:1174.4px;top:216.1px;width:1px;height:44.1px;background:#d8d8d8;"></div><div class="abs" style="left:1283.1px;top:216.1px;width:1px;height:44.1px;background:#d8d8d8;"></div><div class="abs" style="left:1391.8px;top:216.1px;width:1px;height:44.1px;background:#d8d8d8;"></div><div class="abs" style="left:1500.5px;top:216.1px;width:1px;height:44.1px;background:#d8d8d8;"></div><span class="t" style="left:6.20px;top:233.42px;font-size:12.5px;letter-spacing:-0.111px;color:#4c4c4c;">Candidate 2</span><span class="t" style="left:306.00px;top:232.52px;font-size:12.5px;letter-spacing:-0.148px;color:#4c4c4c;">0.75 miles</span><span class="t" style="left:394.82px;top:233.42px;font-size:12.5px;letter-spacing:-0.353px;color:#4c4c4c;">4</span><span class="t" style="left:452.37px;top:232.62px;font-size:12.5px;letter-spacing:-0.361px;color:#4c4c4c;">0.62</span><div class="abs" style="left:494.4px;top:227.8px;width:19.4px;height:19.2px;background:#f03b20;border:1px solid rgba(90,70,70,0.38)"></div><span class="t" style="left:561.64px;top:233.42px;font-size:12.5px;letter-spacing:-0.366px;color:#4c4c4c;">1,194</span><span class="t" style="left:673.62px;top:233.42px;font-size:12.5px;letter-spacing:-0.361px;color:#4c4c4c;">0.09</span><span class="t" style="left:782.32px;top:233.42px;font-size:12.5px;letter-spacing:-0.361px;color:#4c4c4c;">0.02</span><span class="t" style="left:877.89px;top:233.42px;font-size:12.5px;letter-spacing:-0.374px;color:#4c4c4c;">$475,208</span><span class="t" style="left:999.72px;top:233.42px;font-size:12.5px;letter-spacing:-0.361px;color:#4c4c4c;">0.86</span><span class="t" style="left:1108.42px;top:233.42px;font-size:12.5px;letter-spacing:-0.361px;color:#4c4c4c;">0.51</span><span class="t" style="left:1217.12px;top:233.42px;font-size:12.5px;letter-spacing:-0.361px;color:#4c4c4c;">31.9</span><span class="t" style="left:1325.82px;top:233.42px;font-size:12.5px;letter-spacing:-0.361px;color:#4c4c4c;">0.48</span><span class="t" style="left:1434.52px;top:233.42px;font-size:12.5px;letter-spacing:-0.361px;color:#4c4c4c;">0.10</span><div class="abs" style="left:0px;top:303.8px;width:1501px;height:1px;background:#d8d8d8;"></div><div class="abs" style="left:294.4px;top:260.2px;width:1px;height:44.1px;background:#d8d8d8;"></div><div class="abs" style="left:368.4px;top:260.2px;width:1px;height:44.1px;background:#d8d8d8;"></div><div class="abs" style="left:428.4px;top:260.2px;width:1px;height:44.1px;background:#d8d8d8;"></div><div class="abs" style="left:519.3px;top:260.2px;width:1px;height:44.1px;background:#d8d8d8;"></div><div class="abs" style="left:522.2px;top:260.2px;width:1px;height:44.1px;background:#d8d8d8;"></div><div class="abs" style="left:630.9px;top:260.2px;width:1px;height:44.1px;background:#d8d8d8;"></div><div class="abs" style="left:739.6px;top:260.2px;width:1px;height:44.1px;background:#d8d8d8;"></div><div class="abs" style="left:848.3px;top:260.2px;width:1px;height:44.1px;background:#d8d8d8;"></div><div class="abs" style="left:957px;top:260.2px;width:1px;height:44.1px;background:#d8d8d8;"></div><div class="abs" style="left:1065.7px;top:260.2px;width:1px;height:44.1px;background:#d8d8d8;"></div><div class="abs" style="left:1174.4px;top:260.2px;width:1px;height:44.1px;background:#d8d8d8;"></div><div class="abs" style="left:1283.1px;top:260.2px;width:1px;height:44.1px;background:#d8d8d8;"></div><div class="abs" style="left:1391.8px;top:260.2px;width:1px;height:44.1px;background:#d8d8d8;"></div><div class="abs" style="left:1500.5px;top:260.2px;width:1px;height:44.1px;background:#d8d8d8;"></div><span class="t" style="left:6.20px;top:277.52px;font-size:12.5px;letter-spacing:-0.111px;color:#4c4c4c;">Candidate 4</span><span class="t" style="left:306.00px;top:276.62px;font-size:12.5px;letter-spacing:-0.148px;color:#4c4c4c;">0.75 miles</span><span class="t" style="left:394.82px;top:277.52px;font-size:12.5px;letter-spacing:-0.353px;color:#4c4c4c;">5</span><span class="t" style="left:452.37px;top:276.72px;font-size:12.5px;letter-spacing:-0.361px;color:#4c4c4c;">0.00</span><div class="abs" style="left:494.4px;top:271.9px;width:19.4px;height:19.2px;background:#ffffb2;border:1px solid rgba(90,70,70,0.38)"></div><span class="t" style="left:561.64px;top:277.52px;font-size:12.5px;letter-spacing:-0.366px;color:#4c4c4c;">1,136</span><span class="t" style="left:673.62px;top:277.52px;font-size:12.5px;letter-spacing:-0.361px;color:#4c4c4c;">0.00</span><span class="t" style="left:782.32px;top:277.52px;font-size:12.5px;letter-spacing:-0.361px;color:#4c4c4c;">0.00</span><span class="t" style="left:877.89px;top:277.52px;font-size:12.5px;letter-spacing:-0.374px;color:#4c4c4c;">$649,189</span><span class="t" style="left:999.72px;top:277.52px;font-size:12.5px;letter-spacing:-0.361px;color:#4c4c4c;">0.00</span><span class="t" style="left:1108.42px;top:277.52px;font-size:12.5px;letter-spacing:-0.361px;color:#4c4c4c;">0.00</span><span class="t" style="left:1217.12px;top:277.52px;font-size:12.5px;letter-spacing:-0.361px;color:#4c4c4c;">52.5</span><span class="t" style="left:1325.82px;top:277.52px;font-size:12.5px;letter-spacing:-0.361px;color:#4c4c4c;">0.00</span><span class="t" style="left:1434.52px;top:277.52px;font-size:12.5px;letter-spacing:-0.361px;color:#4c4c4c;">0.00</span><svg class="abs" style="left:1504.5px;top:87px" width="12" height="9"><path d="M1.6 7 L6 2.6 L10.4 7" fill="none" stroke="#4c4c4c" stroke-width="1.6"/></svg><svg class="abs" style="left:1504.5px;top:340.5px" width="12" height="9"><path d="M1.6 2 L6 6.4 L10.4 2" fill="none" stroke="#4c4c4c" stroke-width="1.6"/></svg></div>
</div>
</body>
</html>
